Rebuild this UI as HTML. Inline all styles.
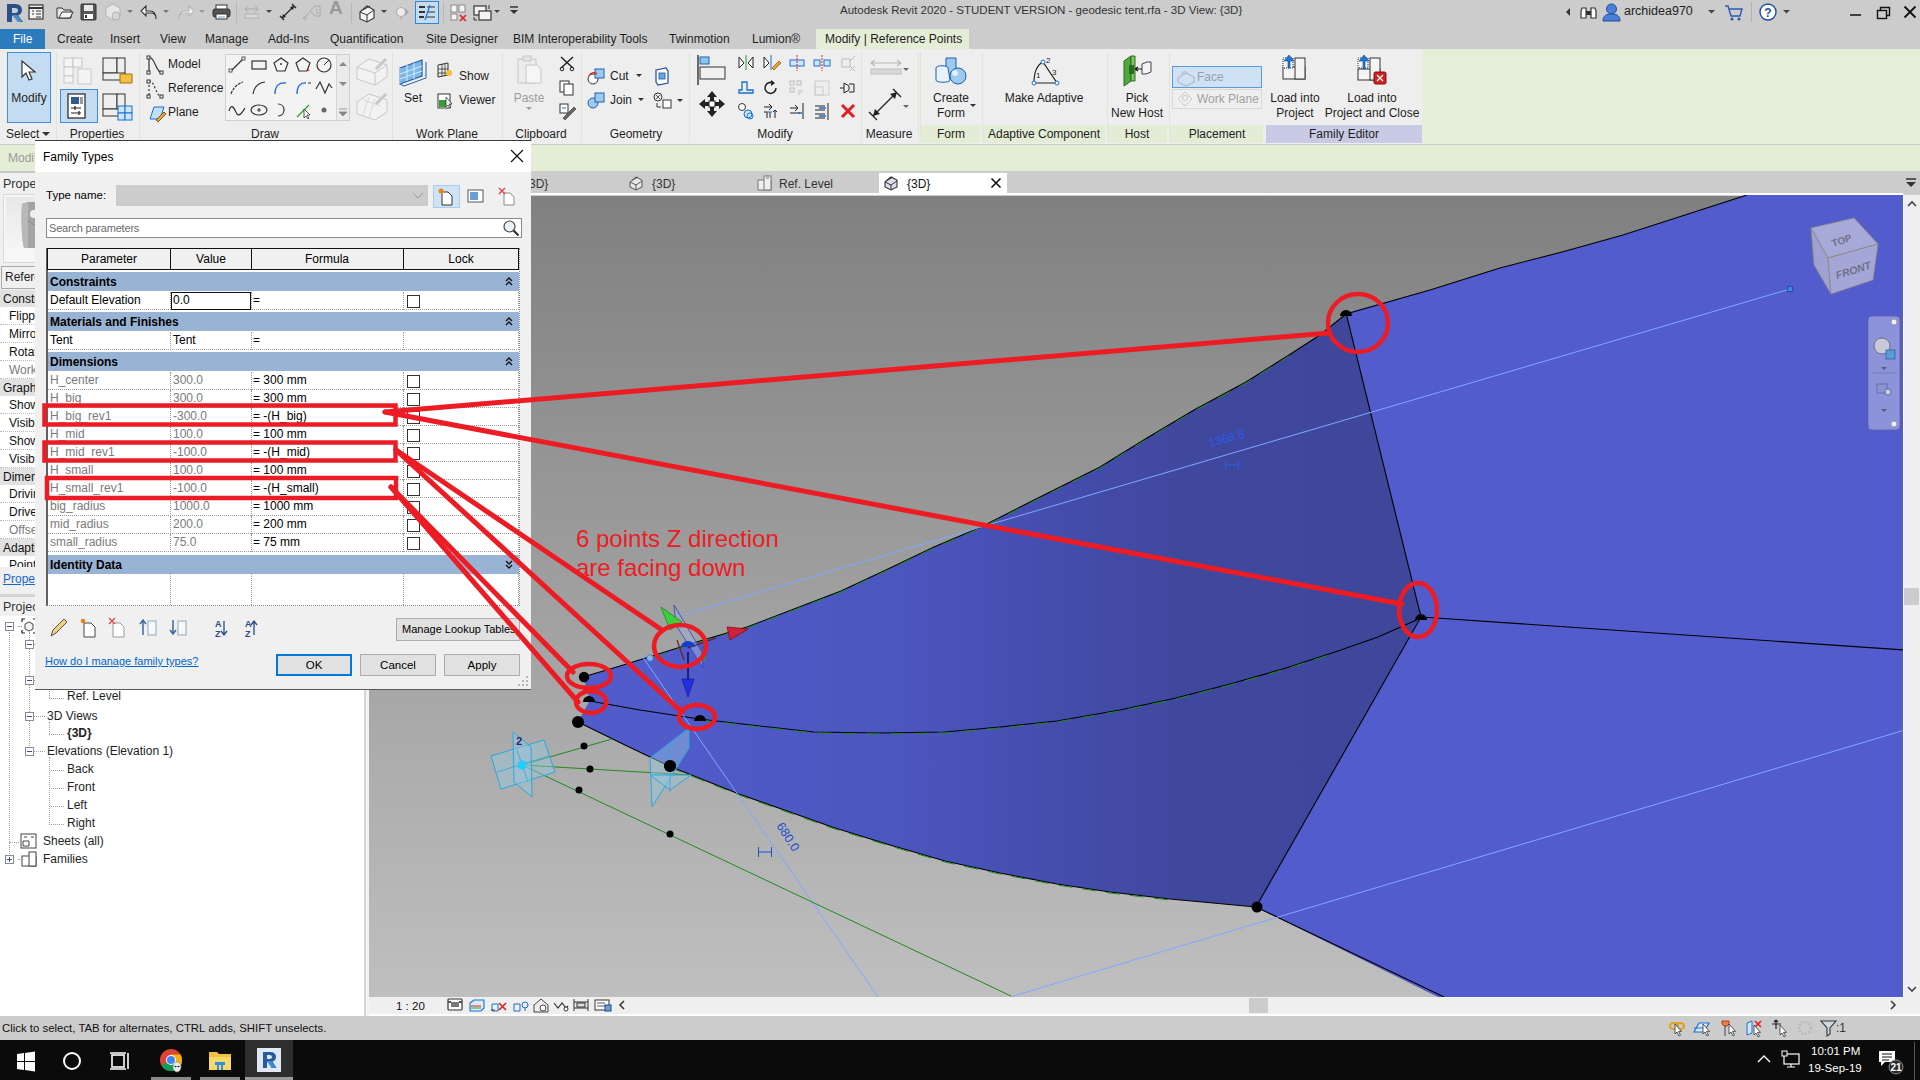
<!DOCTYPE html>
<html><head><meta charset="utf-8"><title>Revit</title>
<style>
*{margin:0;padding:0;box-sizing:border-box}
html,body{width:1920px;height:1080px;overflow:hidden}
body{position:relative;font-family:"Liberation Sans",sans-serif;font-size:12px;color:#1e1e1e;background:#cccccc}
.a{position:absolute}
.t{position:absolute;white-space:nowrap;line-height:14px}
svg{position:absolute;overflow:visible}
</style></head><body>

<!-- TITLE BAR -->
<div class="a" style="left:0;top:0;width:1920px;height:49px;background:#cccccc"></div>
<div class="t" style="left:840px;top:3px;font-size:11.5px;color:#333">Autodesk Revit 2020 - STUDENT VERSION - geodesic tent.rfa - 3D View: {3D}</div>
<!--QAT-->
<svg class="a" style="left:4px;top:2px" width="20" height="20" viewBox="0 0 20 20"><path d="M3,2h8c5,0 7,3 7,6c0,3 -2,5 -4,5.5l5,6.5h-5l-4,-6h-2v6h-5z" fill="#2a4f8a"/><path d="M8,6h3c2,0 3,1 3,2.5c0,1.5 -1,2.5 -3,2.5h-3z" fill="#cccccc"/><path d="M8,13l6,7h4l-5,-7z" fill="#4a90d0"/></svg>
<svg class="a" style="left:28px;top:4px" width="17" height="16" viewBox="0 0 17 16"><rect x="1" y="1" width="14" height="14" fill="#f4f4f4" stroke="#333" stroke-width="1.2"/><path d="M1,4h14" stroke="#333" stroke-width="2"/><path d="M4,7h2M4,10h2M8,7h5M8,10h5M8,13h5" stroke="#333"/></svg>
<svg class="a" style="left:56px;top:5px" width="18" height="14" viewBox="0 0 18 14"><path d="M1,3h5l2,2h7v8h-14z" fill="#e8e8e8" stroke="#333"/><path d="M3,13l3,-6h11l-3,6z" fill="#f4f4f4" stroke="#333"/></svg>
<svg class="a" style="left:80px;top:3px" width="18" height="18" viewBox="0 0 18 18"><rect x="1" y="1" width="15" height="16" rx="1" fill="#555" stroke="#333"/><rect x="4" y="2" width="9" height="6" fill="#e8e8e8"/><rect x="4" y="11" width="9" height="5" fill="#fff"/><rect x="5" y="12" width="2" height="3" fill="#333"/></svg>
<svg class="a" style="left:104px;top:3px" width="18" height="18" viewBox="0 0 18 18"><path d="M9,1l7,4v8l-7,4l-7,-4v-8z" fill="#e6e6e6" stroke="#b4b4b4"/><circle cx="12" cy="13" r="4" fill="#d6d6d6" stroke="#b0b0b0"/></svg>
<svg class="a" style="left:127px;top:10px" width="6" height="4" viewBox="0 0 6 4"><path d="M0,0h6l-3,3z" fill="#777"/></svg>
<svg class="a" style="left:140px;top:4px" width="18" height="16" viewBox="0 0 18 16"><path d="M6,2l-5,5l5,5v-3h5c3,0 5,2 5,5v1c0,-5 -2,-8 -6,-8h-4z" fill="#f4f4f4" stroke="#333" stroke-width="1.1"/></svg>
<svg class="a" style="left:163px;top:10px" width="6" height="4" viewBox="0 0 6 4"><path d="M0,0h6l-3,3z" fill="#777"/></svg>
<svg class="a" style="left:177px;top:4px" width="18" height="16" viewBox="0 0 18 16"><path d="M12,2l5,5l-5,5v-3h-5c-3,0 -5,2 -5,5v1c0,-5 2,-8 6,-8h4z" fill="#f4f4f4" stroke="#b4b4b4" stroke-width="1.1"/></svg>
<svg class="a" style="left:199px;top:10px" width="6" height="4" viewBox="0 0 6 4"><path d="M0,0h6l-3,3z" fill="#999"/></svg>
<svg class="a" style="left:212px;top:4px" width="19" height="16" viewBox="0 0 19 16"><rect x="4" y="1" width="11" height="5" fill="#fff" stroke="#333"/><rect x="1" y="5" width="17" height="8" rx="2" fill="#555" stroke="#333"/><rect x="4" y="10" width="11" height="5" fill="#fff" stroke="#333"/><path d="M6,13h7" stroke="#6aa0d8"/></svg>
<div class="a" style="left:236px;top:2px;width:1px;height:21px;background:#b8b8b8"></div>
<svg class="a" style="left:243px;top:5px" width="17" height="14" viewBox="0 0 17 14"><path d="M2,4h13M2,4l3,-3M2,4l3,3M15,4l-3,-3M15,4l-3,3" stroke="#a8a8a8" fill="none"/><rect x="2" y="9" width="13" height="4" fill="#d8d8d8" stroke="#b0b0b0"/></svg>
<svg class="a" style="left:266px;top:10px" width="6" height="4" viewBox="0 0 6 4"><path d="M0,0h6l-3,3z" fill="#444"/></svg>
<svg class="a" style="left:279px;top:3px" width="18" height="18" viewBox="0 0 18 18"><path d="M3,15l12,-12M1,13l4,4M13,1l4,4" stroke="#222" stroke-width="1.2"/><path d="M3,15l1,-4l3,3zM15,3l-4,1l3,3z" fill="#222"/></svg>
<svg class="a" style="left:303px;top:4px" width="18" height="16" viewBox="0 0 18 16"><path d="M2,13l4,-4" stroke="#aaa"/><path d="M7,7l5,-5h5v10h-5z" fill="none" stroke="#aaa"/><text x="12" y="10" font-size="7" fill="#aaa">1</text><circle cx="2" cy="14" r="1.5" fill="none" stroke="#aaa"/></svg>
<div class="t" style="left:329px;top:1px;font-size:19px;color:#999;font-weight:bold;">A</div>
<div class="a" style="left:351px;top:2px;width:1px;height:21px;background:#b8b8b8"></div>
<svg class="a" style="left:358px;top:4px" width="18" height="17" viewBox="0 0 18 17"><path d="M2,8l7,-6l7,4v8l-7,4l-7,-3z" fill="#f4f4f4" stroke="#333" stroke-width="1.1"/><path d="M2,8l7,3l7,-5M9,11v7" stroke="#333" fill="none"/><path d="M5,6l7,-4" stroke="#333"/></svg>
<svg class="a" style="left:381px;top:10px" width="6" height="4" viewBox="0 0 6 4"><path d="M0,0h6l-3,3z" fill="#444"/></svg>
<svg class="a" style="left:394px;top:4px" width="16" height="16" viewBox="0 0 16 16"><circle cx="7" cy="8" r="4.5" fill="#ececec" stroke="#aaa"/><path d="M11,4l4,4l-4,4z" fill="#aaa"/><path d="M7,12v4" stroke="#aaa"/></svg>
<div class="a" style="left:415px;top:1px;width:24px;height:23px;background:#c4dcf2;border:1px solid #2f86d8"></div>
<svg class="a" style="left:418px;top:4px" width="18" height="17" viewBox="0 0 18 17"><path d="M1,3h6M1,8h6M1,13h5" stroke="#333" stroke-width="2.2"/><path d="M9,3h8M9,8h8M8,13h9" stroke="#333" stroke-width="1"/><path d="M12,1l-5,15" stroke="#1a78d8" stroke-width="1.2"/></svg>
<div class="a" style="left:443px;top:2px;width:1px;height:21px;background:#b8b8b8"></div>
<svg class="a" style="left:450px;top:4px" width="18" height="18" viewBox="0 0 18 18"><rect x="1" y="1" width="6" height="7" fill="#f4f4f4" stroke="#888"/><rect x="9" y="1" width="6" height="7" fill="#f4f4f4" stroke="#888"/><rect x="1" y="10" width="6" height="6" fill="#f4f4f4" stroke="#888"/><path d="M10,11l6,6M16,11l-6,6" stroke="#e02020" stroke-width="1.6"/></svg>
<svg class="a" style="left:473px;top:4px" width="20" height="17" viewBox="0 0 20 17"><rect x="1" y="2" width="12" height="9" fill="#f4f4f4" stroke="#333" stroke-width="1.2"/><rect x="6" y="7" width="12" height="9" fill="#f4f4f4" stroke="#333" stroke-width="1.2"/><path d="M16,1v4M1,13v3h3" stroke="#333" fill="none"/></svg>
<svg class="a" style="left:494px;top:10px" width="6" height="4" viewBox="0 0 6 4"><path d="M0,0h6l-3,3z" fill="#444"/></svg>
<svg class="a" style="left:509px;top:6px" width="10" height="10" viewBox="0 0 10 10"><path d="M1,1h8" stroke="#333" stroke-width="1.5"/><path d="M1,4h8l-4,4z" fill="#333"/></svg>
<svg class="a" style="left:1565px;top:7px" width="6" height="10" viewBox="0 0 6 10"><path d="M5,1v8l-4,-4z" fill="#333"/></svg>
<svg class="a" style="left:1579px;top:4px" width="19" height="17" viewBox="0 0 19 17"><path d="M3,4h4v10h-5v-7zM12,4h4l1,3v7h-5z" fill="#fff" stroke="#333" stroke-width="1.2"/><rect x="7" y="7" width="5" height="4" fill="#333"/></svg>
<svg class="a" style="left:1602px;top:2px" width="19" height="20" viewBox="0 0 19 20"><circle cx="9.5" cy="7" r="5" fill="#4a7ed8" stroke="#1f4f98"/><path d="M1,19c0,-6 4,-7 8.5,-7s8.5,1 8.5,7z" fill="#4a7ed8" stroke="#1f4f98"/></svg>
<div class="t" style="left:1624px;top:4px;font-size:12.5px;color:#222;">archidea970</div>
<svg class="a" style="left:1708px;top:10px" width="7" height="4" viewBox="0 0 7 4"><path d="M0,0h7l-3.5,3.5z" fill="#444"/></svg>
<svg class="a" style="left:1724px;top:4px" width="19" height="17" viewBox="0 0 19 17"><path d="M1,2h3l3,10h9l2,-7h-13" fill="none" stroke="#2a5ab0" stroke-width="1.4"/><circle cx="8" cy="15" r="1.5" fill="#2a5ab0"/><circle cx="15" cy="15" r="1.5" fill="#2a5ab0"/></svg>
<div class="a" style="left:1751px;top:2px;width:1px;height:20px;background:#b0b0b0"></div>
<svg class="a" style="left:1759px;top:3px" width="18" height="18" viewBox="0 0 18 18"><circle cx="9" cy="9" r="8" fill="#fff" stroke="#1f4f98" stroke-width="1.4"/><text x="5.3" y="13.5" font-size="12" font-weight="bold" fill="#1f4f98" font-family="Liberation Sans">?</text></svg>
<svg class="a" style="left:1783px;top:10px" width="7" height="4" viewBox="0 0 7 4"><path d="M0,0h7l-3.5,3.5z" fill="#444"/></svg>
<svg class="a" style="left:1849px;top:13px" width="14" height="4" viewBox="0 0 14 4"><path d="M1,2h11" stroke="#111" stroke-width="1.5"/></svg>
<svg class="a" style="left:1876px;top:6px" width="15" height="14" viewBox="0 0 15 14"><rect x="1.5" y="4.5" width="9" height="8" fill="none" stroke="#111" stroke-width="1.4"/><path d="M4.5,4.5v-3h9v8h-3" fill="none" stroke="#111" stroke-width="1.4"/></svg>
<svg class="a" style="left:1903px;top:5px" width="14" height="14" viewBox="0 0 14 14"><path d="M1.5,1.5l11,11M12.5,1.5l-11,11" stroke="#111" stroke-width="1.8"/></svg>
<!--/QAT-->

<!-- TABS -->
<div class="a" style="left:0;top:29px;width:45px;height:20px;background:#2b7bbd"></div>
<div class="t" style="left:13px;top:32px;color:#fff">File</div>
<div class="t" style="left:57px;top:32px">Create</div>
<div class="t" style="left:110px;top:32px">Insert</div>
<div class="t" style="left:160px;top:32px">View</div>
<div class="t" style="left:205px;top:32px">Manage</div>
<div class="t" style="left:268px;top:32px">Add-Ins</div>
<div class="t" style="left:330px;top:32px">Quantification</div>
<div class="t" style="left:426px;top:32px">Site Designer</div>
<div class="t" style="left:513px;top:32px">BIM Interoperability Tools</div>
<div class="t" style="left:669px;top:32px">Twinmotion</div>
<div class="t" style="left:752px;top:32px">Lumion®</div>
<div class="a" style="left:816px;top:29px;width:153px;height:20px;background:#e4edd6"></div>
<div class="t" style="left:825px;top:32px">Modify | Reference Points</div>

<!-- RIBBON -->
<div class="a" style="left:0;top:49px;width:1920px;height:96px;background:#e5eed8"></div>
<div class="a" style="left:0;top:49px;width:1422px;height:95px;background:#eeeeee"></div>
<div class="a" style="left:0;top:144px;width:1920px;height:1px;background:#c8c8c8"></div>
<!--RIBBONCONTENT-->
<div class="a" style="left:56px;top:52px;width:1px;height:90px;background:#dfe6d6;"></div>
<div class="a" style="left:139px;top:52px;width:1px;height:90px;background:#dfe6d6;"></div>
<div class="a" style="left:392px;top:52px;width:1px;height:90px;background:#dfe6d6;"></div>
<div class="a" style="left:502px;top:52px;width:1px;height:90px;background:#dfe6d6;"></div>
<div class="a" style="left:581px;top:52px;width:1px;height:90px;background:#dfe6d6;"></div>
<div class="a" style="left:689px;top:52px;width:1px;height:90px;background:#dfe6d6;"></div>
<div class="a" style="left:861px;top:52px;width:1px;height:90px;background:#dfe6d6;"></div>
<div class="a" style="left:918px;top:52px;width:1px;height:90px;background:#dfe6d6;"></div>
<div class="a" style="left:921px;top:125px;width:59px;height:18px;background:#e3ecd5;"></div>
<div class="a" style="left:920px;top:52px;width:1px;height:90px;background:#dfe6d6;"></div>
<div class="a" style="left:983px;top:125px;width:122px;height:18px;background:#e3ecd5;"></div>
<div class="a" style="left:982px;top:52px;width:1px;height:90px;background:#dfe6d6;"></div>
<div class="a" style="left:1108px;top:125px;width:59px;height:18px;background:#e3ecd5;"></div>
<div class="a" style="left:1107px;top:52px;width:1px;height:90px;background:#dfe6d6;"></div>
<div class="a" style="left:1170px;top:125px;width:93px;height:18px;background:#e3ecd5;"></div>
<div class="a" style="left:1169px;top:52px;width:1px;height:90px;background:#dfe6d6;"></div>
<div class="a" style="left:1266px;top:125px;width:156px;height:18px;background:#c8cae6;"></div>
<div class="t" style="left:6px;top:127px;font-size:12px;color:#1e1e1e">Select</div>
<div class="t" style="left:17.0px;width:160px;text-align:center;top:127px;font-size:12px;color:#1e1e1e">Properties</div>
<div class="t" style="left:185.0px;width:160px;text-align:center;top:127px;font-size:12px;color:#1e1e1e">Draw</div>
<div class="t" style="left:367.0px;width:160px;text-align:center;top:127px;font-size:12px;color:#1e1e1e">Work Plane</div>
<div class="t" style="left:461.0px;width:160px;text-align:center;top:127px;font-size:12px;color:#1e1e1e">Clipboard</div>
<div class="t" style="left:556.0px;width:160px;text-align:center;top:127px;font-size:12px;color:#1e1e1e">Geometry</div>
<div class="t" style="left:695.0px;width:160px;text-align:center;top:127px;font-size:12px;color:#1e1e1e">Modify</div>
<div class="t" style="left:809.0px;width:160px;text-align:center;top:127px;font-size:12px;color:#1e1e1e">Measure</div>
<div class="t" style="left:871.0px;width:160px;text-align:center;top:127px;font-size:12px;color:#1e1e1e">Form</div>
<div class="t" style="left:964.0px;width:160px;text-align:center;top:127px;font-size:12px;color:#1e1e1e">Adaptive Component</div>
<div class="t" style="left:1057.0px;width:160px;text-align:center;top:127px;font-size:12px;color:#1e1e1e">Host</div>
<div class="t" style="left:1137.0px;width:160px;text-align:center;top:127px;font-size:12px;color:#1e1e1e">Placement</div>
<div class="t" style="left:1264.0px;width:160px;text-align:center;top:127px;font-size:12px;color:#1e1e1e">Family Editor</div>
<svg class="a" style="left:41px;top:131px" width="10" height="6" viewBox="0 0 10 6"><path d="M1,1h8l-4,4z" fill="#333"/></svg>
<div class="a" style="left:7px;top:52px;width:44px;height:71px;background:#c4dcf2;border:1px solid #3c8fe0"></div>
<svg class="a" style="left:20px;top:60px" width="16" height="22" viewBox="0 0 16 22"><path d="M2,1v16l4,-4l3,7l3,-1l-3,-7h6z" fill="#fff" stroke="#333" stroke-width="1.2"/></svg>
<div class="t" style="left:-51.0px;width:160px;text-align:center;top:91px;font-size:12px;color:#1e1e1e">Modify</div>
<svg class="a" style="left:62px;top:55px" width="32" height="30" viewBox="0 0 32 30"><g fill="#f4f4f4" stroke="#c8c8c8"><rect x="2" y="3" width="9" height="9"/><rect x="11" y="3" width="9" height="9"/><rect x="2" y="12" width="9" height="9"/><rect x="2" y="21" width="9" height="7"/><rect x="16" y="14" width="13" height="15"/></g></svg>
<svg class="a" style="left:102px;top:55px" width="32" height="30" viewBox="0 0 32 30"><rect x="1" y="3" width="14" height="15" fill="#eee" stroke="#333"/><rect x="15" y="3" width="8" height="20" fill="#eee" stroke="#333"/><rect x="1" y="18" width="22" height="7" fill="#eee" stroke="#333"/><path d="M18,19h12v9h-12z" fill="#f2c040" stroke="#a07010"/></svg>
<div class="a" style="left:60px;top:89px;width:38px;height:34px;background:#c4dcf2;border:1px solid #3c8fe0"></div>
<svg class="a" style="left:66px;top:92px" width="26" height="30" viewBox="0 0 26 30"><rect x="2" y="2" width="17" height="24" fill="#fff" stroke="#222" stroke-width="1.2"/><rect x="5" y="5" width="8" height="7" fill="#2f5a90"/><rect x="14" y="5" width="3" height="7" fill="#999"/><path d="M5,16h10M5,21h10M9,14v4M13,19v4" stroke="#222" stroke-width="1.2"/></svg>
<svg class="a" style="left:102px;top:92px" width="32" height="30" viewBox="0 0 32 30"><rect x="1" y="2" width="14" height="15" fill="#eee" stroke="#333"/><rect x="15" y="2" width="8" height="18" fill="#eee" stroke="#333"/><rect x="1" y="17" width="22" height="7" fill="#eee" stroke="#333"/><g fill="#cfe6ff" stroke="#1a6fd0"><rect x="16" y="14" width="7" height="7"/><rect x="23" y="14" width="7" height="7"/><rect x="16" y="21" width="7" height="7"/><rect x="23" y="21" width="7" height="7"/></g></svg>
<svg class="a" style="left:146px;top:55px" width="20" height="20" viewBox="0 0 20 20"><path d="M3,2v16M3,2c6,0 7,16 13,16" stroke="#333" fill="none" stroke-width="1.2"/><rect x="1" y="1" width="3" height="3" fill="#fff" stroke="#333"/><rect x="1" y="16" width="3" height="3" fill="#fff" stroke="#333"/><rect x="14" y="16" width="3" height="3" fill="#fff" stroke="#333"/></svg>
<div class="t" style="left:168px;top:57px;font-size:12px;color:#1e1e1e;">Model</div>
<svg class="a" style="left:146px;top:79px" width="20" height="20" viewBox="0 0 20 20"><path d="M3,2v16M3,2c6,0 7,16 13,16" stroke="#333" fill="none" stroke-width="1.2" stroke-dasharray="2,2"/><rect x="1" y="1" width="3" height="3" fill="#fff" stroke="#333"/><rect x="1" y="16" width="3" height="3" fill="#fff" stroke="#333"/><rect x="14" y="16" width="3" height="3" fill="#fff" stroke="#333"/></svg>
<div class="t" style="left:168px;top:81px;font-size:12px;color:#1e1e1e;">Reference</div>
<svg class="a" style="left:146px;top:103px" width="20" height="20" viewBox="0 0 20 20"><path d="M4,16l4,-12h10l-4,12z" fill="#bfe0f8" stroke="#1a6fd0"/><path d="M10,17l8,-8l2,2l-8,8z" fill="#f0a030" stroke="#6a3a00" stroke-width="0.8"/></svg>
<div class="t" style="left:168px;top:105px;font-size:12px;color:#1e1e1e;">Plane</div>
<div class="a" style="left:225px;top:54px;width:125px;height:67px;background:#f3f3f3;border:1px solid #cfcfcf"></div>
<div class="a" style="left:336px;top:55px;width:13px;height:65px;background:#eaeaea;border-left:1px solid #d4d4d4"></div>
<svg class="a" style="left:337px;top:60px" width="12" height="60" viewBox="0 0 12 60"><path d="M2,6l4,-4l4,4z" fill="#888"/><path d="M2,22l4,4l4,-4z" fill="#888"/><path d="M2,49h8M2,52l4,4l4,-4z" fill="#888" stroke="#888" stroke-width="0.8"/></svg>
<svg class="a" style="left:228px;top:56px" width="18" height="18" viewBox="0 0 18 18"><path d="M3,15l12,-12" stroke="#333" stroke-width="1.2"/><rect x="1" y="13" width="3" height="3" fill="#fff" stroke="#333" stroke-width="0.8"/><rect x="14" y="1" width="3" height="3" fill="#fff" stroke="#333" stroke-width="0.8"/></svg>
<svg class="a" style="left:250px;top:56px" width="18" height="18" viewBox="0 0 18 18"><rect x="2" y="5" width="14" height="8" fill="none" stroke="#333" stroke-width="1.2"/></svg>
<svg class="a" style="left:272px;top:56px" width="18" height="18" viewBox="0 0 18 18"><path d="M9,2l7,5l-3,8h-8l-3,-8z" fill="none" stroke="#333" stroke-width="1.2"/><circle cx="9" cy="8" r="1" fill="#333"/></svg>
<svg class="a" style="left:294px;top:56px" width="18" height="18" viewBox="0 0 18 18"><path d="M9,2l7,5l-3,8h-8l-3,-8z" fill="none" stroke="#333" stroke-width="1.2"/><path d="M13,12l2,3" stroke="#e02020" stroke-width="1.2"/></svg>
<svg class="a" style="left:315px;top:56px" width="18" height="18" viewBox="0 0 18 18"><circle cx="9" cy="9" r="7" fill="none" stroke="#333" stroke-width="1.2"/><path d="M9,9l5,-5" stroke="#333"/></svg>
<svg class="a" style="left:228px;top:79px" width="18" height="18" viewBox="0 0 18 18"><path d="M3,15c2,-6 6,-10 12,-12" stroke="#333" stroke-width="1.2" fill="none" stroke-dasharray="3,1"/></svg>
<svg class="a" style="left:250px;top:79px" width="18" height="18" viewBox="0 0 18 18"><path d="M3,15c1,-7 5,-11 12,-12" stroke="#333" stroke-width="1.2" fill="none"/></svg>
<svg class="a" style="left:272px;top:79px" width="18" height="18" viewBox="0 0 18 18"><path d="M3,15c0,-8 4,-12 11,-11" stroke="#1a6fd0" stroke-width="1.4" fill="none"/></svg>
<svg class="a" style="left:294px;top:79px" width="18" height="18" viewBox="0 0 18 18"><path d="M3,15c0,-8 4,-12 9,-11" stroke="#1a6fd0" stroke-width="1.4" fill="none"/><path d="M14,4h3" stroke="#333"/></svg>
<svg class="a" style="left:315px;top:79px" width="18" height="18" viewBox="0 0 18 18"><path d="M1,10l4,-7l5,11l4,-9l3,4" stroke="#333" stroke-width="1.2" fill="none"/></svg>
<svg class="a" style="left:228px;top:101px" width="18" height="18" viewBox="0 0 18 18"><path d="M1,10c3,-10 6,0 8,3c3,3 6,-3 8,-6" stroke="#333" stroke-width="1.2" fill="none"/></svg>
<svg class="a" style="left:250px;top:101px" width="18" height="18" viewBox="0 0 18 18"><ellipse cx="9" cy="9" rx="8" ry="5" fill="none" stroke="#333" stroke-width="1.2"/><path d="M9,7v4M7,9h4" stroke="#333"/></svg>
<svg class="a" style="left:272px;top:101px" width="18" height="18" viewBox="0 0 18 18"><path d="M6,3c8,0 8,12 0,12" stroke="#333" stroke-width="1.2" fill="none"/></svg>
<svg class="a" style="left:294px;top:101px" width="18" height="18" viewBox="0 0 18 18"><path d="M3,16l12,-12" stroke="#22aa22" stroke-width="1.3"/><path d="M10,8v9l2,-2l2,3l1,-1l-2,-3h3z" fill="#fff" stroke="#333" stroke-width="0.8"/></svg>
<svg class="a" style="left:315px;top:101px" width="18" height="18" viewBox="0 0 18 18"><circle cx="9" cy="9" r="2.5" fill="#666"/></svg>
<svg class="a" style="left:354px;top:55px" width="36" height="30" viewBox="0 0 36 30"><path d="M3,12l12,-8l18,6v12l-12,8l-18,-6z" fill="#f2f2f2" stroke="#c8c8c8"/><path d="M3,12l18,6l12,-8M21,18v12" stroke="#c8c8c8" fill="none"/><path d="M22,14l10,-10" stroke="#c8c8c8" stroke-width="3"/></svg>
<svg class="a" style="left:354px;top:90px" width="36" height="30" viewBox="0 0 36 30"><path d="M3,12l12,-8l18,6v12l-12,8l-18,-6z" fill="#f2f2f2" stroke="#c8c8c8"/><path d="M9,10l18,6M15,7l-6,18M21,9l-6,18" stroke="#d8d8d8" fill="none"/><path d="M22,14l10,-10" stroke="#c8c8c8" stroke-width="3"/></svg>
<svg class="a" style="left:398px;top:56px" width="30" height="30" viewBox="0 0 30 30"><path d="M2,12l22,-8v16l-22,8z" fill="#7ab8e8" stroke="#1f5fa8" stroke-width="1.2"/><path d="M2,12v16M9,9v16M16,7v16M2,18l22,-8M2,23l22,-8" stroke="#d8ecfa" stroke-width="1"/><path d="M2,28l4,2l22,-8v-16" fill="none" stroke="#1f5fa8"/></svg>
<div class="t" style="left:333.0px;width:160px;text-align:center;top:91px;font-size:12px;color:#1e1e1e">Set</div>
<svg class="a" style="left:436px;top:61px" width="18" height="18" viewBox="0 0 18 18"><path d="M2,4l10,-2v12l-10,2z" fill="none" stroke="#333"/><path d="M2,8h10M2,12h10M6,3v12M9,3v12" stroke="#333" stroke-width="0.8"/><circle cx="13" cy="12" r="3" fill="#f8c030"/></svg>
<div class="t" style="left:459px;top:69px;font-size:12px;color:#1e1e1e;">Show</div>
<svg class="a" style="left:436px;top:92px" width="18" height="18" viewBox="0 0 18 18"><rect x="2" y="2" width="12" height="14" fill="#fff" stroke="#333"/><rect x="3" y="8" width="7" height="7" fill="#3a9a3a"/><path d="M10,5v10l2,-2l2,3l1,-1l-2,-3h3z" fill="#fff" stroke="#333" stroke-width="0.8"/></svg>
<div class="t" style="left:459px;top:93px;font-size:12px;color:#1e1e1e;">Viewer</div>
<svg class="a" style="left:515px;top:54px" width="30" height="32" viewBox="0 0 30 32"><rect x="3" y="5" width="18" height="24" fill="#ececec" stroke="#c6c6c6"/><rect x="8" y="2" width="8" height="5" fill="#e4e4e4" stroke="#c6c6c6"/><path d="M11,11h11l4,4v14h-15z" fill="#f6f6f6" stroke="#c6c6c6"/></svg>
<div class="t" style="left:449.0px;width:160px;text-align:center;top:91px;font-size:12px;color:#9c9c9c">Paste</div>
<svg class="a" style="left:525px;top:106px" width="8" height="5" viewBox="0 0 8 5"><path d="M1,1h6l-3,3z" fill="#9c9c9c"/></svg>
<svg class="a" style="left:559px;top:55px" width="16" height="16" viewBox="0 0 16 16"><path d="M2,2l12,11M14,2l-12,11" stroke="#222" stroke-width="1.5"/><circle cx="3" cy="14" r="1.8" fill="none" stroke="#222"/><circle cx="13" cy="14" r="1.8" fill="none" stroke="#222"/></svg>
<svg class="a" style="left:559px;top:80px" width="16" height="16" viewBox="0 0 16 16"><rect x="1" y="1" width="9" height="11" fill="#fff" stroke="#333"/><rect x="5" y="4" width="9" height="11" fill="#fff" stroke="#333"/></svg>
<svg class="a" style="left:559px;top:103px" width="18" height="16" viewBox="0 0 18 16"><rect x="1" y="1" width="8" height="9" fill="#fff" stroke="#333"/><path d="M3,5h4" stroke="#1a6fd0"/><path d="M4,15l11,-11l2,2l-11,11z" fill="#666" stroke="#333" stroke-width="0.6"/></svg>
<svg class="a" style="left:587px;top:67px" width="20" height="18" viewBox="0 0 20 18"><circle cx="6" cy="12" r="5" fill="#fff" stroke="#333"/><rect x="8" y="2" width="9" height="9" fill="#9ccaf0" stroke="#1f5fa8"/><path d="M2,9a5,5 0 0 1 8,-2" stroke="#e02020" fill="none" stroke-width="1.2"/></svg>
<div class="t" style="left:610px;top:69px;font-size:12px;color:#1e1e1e;">Cut</div>
<svg class="a" style="left:636px;top:74px" width="6" height="4" viewBox="0 0 6 4"><path d="M0,0h6l-3,3z" fill="#333"/></svg>
<svg class="a" style="left:587px;top:91px" width="20" height="18" viewBox="0 0 20 18"><circle cx="6" cy="12" r="5" fill="#9ccaf0" stroke="#1f5fa8"/><rect x="8" y="2" width="9" height="9" fill="#9ccaf0" stroke="#1f5fa8"/></svg>
<div class="t" style="left:610px;top:93px;font-size:12px;color:#1e1e1e;">Join</div>
<svg class="a" style="left:638px;top:98px" width="6" height="4" viewBox="0 0 6 4"><path d="M0,0h6l-3,3z" fill="#333"/></svg>
<svg class="a" style="left:654px;top:67px" width="16" height="18" viewBox="0 0 16 18"><path d="M2,3l10,-2l2,3v12l-10,2l-2,-3z" fill="#fff" stroke="#1f4f98" stroke-width="1.2"/><rect x="5" y="6" width="6" height="6" fill="#6aa8e0" stroke="#1f4f98" stroke-width="0.8"/></svg>
<svg class="a" style="left:653px;top:92px" width="24" height="18" viewBox="0 0 24 18"><circle cx="5" cy="5" r="4" fill="none" stroke="#333"/><path d="M3,3l4,4M7,3l-4,4" stroke="#333" stroke-width="0.8"/><rect x="10" y="8" width="8" height="8" fill="#fff" stroke="#333"/><path d="M4,11v4h4" stroke="#333" fill="none"/></svg>
<svg class="a" style="left:677px;top:99px" width="6" height="4" viewBox="0 0 6 4"><path d="M0,0h6l-3,3z" fill="#333"/></svg>
<svg class="a" style="left:696px;top:54px" width="32" height="32" viewBox="0 0 32 32"><path d="M2,1v30" stroke="#222" stroke-width="1.3"/><rect x="4" y="3" width="9" height="7" fill="#8cc4ee" stroke="#1f5fa8"/><rect x="4" y="13" width="25" height="12" fill="#f0f0f0" stroke="#333"/></svg>
<svg class="a" style="left:697px;top:89px" width="30" height="32" viewBox="0 0 30 32"><path d="M15,2l5,6h-3v5h5v-3l6,5l-6,5v-3h-5v5h3l-5,6l-5,-6h3v-5h-5v3l-6,-5l6,-5v3h5v-5h-3z" fill="#222"/><rect x="12" y="12" width="6" height="6" fill="#fff" stroke="#222"/></svg>
<svg class="a" style="left:737px;top:54px" width="18" height="18" viewBox="0 0 18 18"><path d="M2,3v11l5,-5zM16,3v11l-5,-5z" fill="#fff" stroke="#222"/><path d="M9,1v15" stroke="#2a9a2a"/></svg>
<svg class="a" style="left:762px;top:54px" width="18" height="18" viewBox="0 0 18 18"><path d="M2,3v11l5,-5z" fill="#fff" stroke="#222"/><path d="M9,1v15" stroke="#2a6ad0"/><path d="M10,14l7,-7l2,2l-7,7z" fill="#f0a030" stroke="#6a3a00" stroke-width="0.6"/></svg>
<svg class="a" style="left:788px;top:54px" width="18" height="18" viewBox="0 0 18 18"><rect x="2" y="6" width="14" height="6" fill="#cfe6fa" stroke="#1a6fd0"/><path d="M9,1v16" stroke="#e02020" stroke-dasharray="2,1"/></svg>
<svg class="a" style="left:813px;top:54px" width="18" height="18" viewBox="0 0 18 18"><rect x="1" y="6" width="6" height="6" fill="#cfe6fa" stroke="#1a6fd0"/><rect x="11" y="6" width="6" height="6" fill="#cfe6fa" stroke="#1a6fd0"/><path d="M9,1v16" stroke="#e02020" stroke-dasharray="2,1"/></svg>
<svg class="a" style="left:839px;top:54px" width="18" height="18" viewBox="0 0 18 18"><path d="M3,5h8v8h-8zM11,7l5,-5" stroke="#bbb" fill="none"/><path d="M11,12l5,5M16,12l-5,5" stroke="#bbb"/></svg>
<svg class="a" style="left:737px;top:79px" width="18" height="18" viewBox="0 0 18 18"><path d="M2,14h14v-3h-6v-8h-5v8h-3z" fill="none" stroke="#1a6fd0" stroke-width="1.3"/></svg>
<svg class="a" style="left:762px;top:79px" width="18" height="18" viewBox="0 0 18 18"><path d="M14,9a5.5,5.5 0 1 1 -3,-5" fill="none" stroke="#222" stroke-width="1.5"/><path d="M9,1l4,3l-4,3z" fill="#222"/></svg>
<svg class="a" style="left:788px;top:79px" width="18" height="18" viewBox="0 0 18 18"><g fill="none" stroke="#bbb"><rect x="2" y="2" width="4" height="4"/><rect x="9" y="2" width="4" height="4"/><rect x="2" y="9" width="4" height="4"/></g><text x="10" y="16" font-size="7" fill="#bbb">P</text></svg>
<svg class="a" style="left:813px;top:79px" width="18" height="18" viewBox="0 0 18 18"><rect x="2" y="2" width="14" height="14" fill="none" stroke="#ccc"/><rect x="2" y="8" width="8" height="8" fill="none" stroke="#ccc"/></svg>
<svg class="a" style="left:839px;top:79px" width="18" height="18" viewBox="0 0 18 18"><path d="M1,9h4M5,4v10l5,-3v-4z" fill="none" stroke="#222"/><path d="M10,5h5v8h-5" fill="none" stroke="#222"/></svg>
<svg class="a" style="left:737px;top:102px" width="18" height="18" viewBox="0 0 18 18"><circle cx="5" cy="5" r="3.5" fill="#fff" stroke="#333"/><circle cx="11" cy="12" r="4" fill="#cfe6fa" stroke="#1a6fd0"/><circle cx="13" cy="14" r="3" fill="none" stroke="#1a6fd0"/></svg>
<svg class="a" style="left:762px;top:102px" width="18" height="18" viewBox="0 0 18 18"><path d="M2,5h8M7,2l3,3l-3,3M2,10h3v6M8,10v6M13,16v-8M11,10l2,-2l2,2" stroke="#222" fill="none"/><path d="M5,10h5" stroke="#1a6fd0"/></svg>
<svg class="a" style="left:788px;top:102px" width="18" height="18" viewBox="0 0 18 18"><path d="M2,6h8M7,3l3,3l-3,3M2,11h10M15,1v16" stroke="#222" fill="none"/><path d="M10,11h4" stroke="#1a6fd0" stroke-width="1.5"/></svg>
<svg class="a" style="left:813px;top:102px" width="18" height="18" viewBox="0 0 18 18"><path d="M2,4h10M2,8h10M2,12h10M2,16h10M15,1v17" stroke="#222" fill="none"/><path d="M6,6h7M6,14h7" stroke="#1a6fd0" stroke-width="1.5"/></svg>
<svg class="a" style="left:839px;top:102px" width="18" height="18" viewBox="0 0 18 18"><path d="M3,3l12,12M15,3l-12,12" stroke="#e02020" stroke-width="3"/></svg>
<svg class="a" style="left:867px;top:58px" width="40" height="20" viewBox="0 0 40 20"><path d="M4,5h30M4,5l4,-3M4,5l4,3M34,5l-4,-3M34,5l-4,3" stroke="#b8b8b8" fill="none" stroke-width="1.2"/><rect x="4" y="11" width="30" height="5" fill="#d8d8d8" stroke="#c0c0c0"/></svg>
<svg class="a" style="left:903px;top:68px" width="6" height="4" viewBox="0 0 6 4"><path d="M0,0h6l-3,3z" fill="#666"/></svg>
<svg class="a" style="left:867px;top:88px" width="40" height="34" viewBox="0 0 40 34"><path d="M6,28l24,-24M2,24l8,8M26,1l8,8" stroke="#222" stroke-width="1.3" fill="none"/><path d="M6,28l2,-7l5,5zM30,4l-7,2l5,5z" fill="#222"/></svg>
<svg class="a" style="left:903px;top:105px" width="6" height="4" viewBox="0 0 6 4"><path d="M0,0h6l-3,3z" fill="#666"/></svg>
<svg class="a" style="left:934px;top:54px" width="34" height="32" viewBox="0 0 34 32"><path d="M12,4h10v20h-10z" fill="#9ccaf0" stroke="#1f5fa8"/><path d="M2,14c0,-3 12,-3 12,0l2,12c0,3 -14,3 -14,0z" fill="#e8f2fc" stroke="#1f5fa8"/><circle cx="24" cy="22" r="8" fill="#9ccaf0" stroke="#1f5fa8"/><circle cx="21" cy="19" r="3" fill="#e0f0ff"/></svg>
<div class="t" style="left:871.0px;width:160px;text-align:center;top:91px;font-size:12px;color:#1e1e1e">Create</div>
<div class="t" style="left:871.0px;width:160px;text-align:center;top:106px;font-size:12px;color:#1e1e1e">Form</div>
<svg class="a" style="left:970px;top:104px" width="6" height="4" viewBox="0 0 6 4"><path d="M0,0h6l-3,3z" fill="#333"/></svg>
<svg class="a" style="left:1030px;top:56px" width="34" height="32" viewBox="0 0 34 32"><path d="M4,27c0,-10 3,-18 9,-21l14,21z" fill="none" stroke="#222" stroke-width="1.2"/><circle cx="4" cy="27" r="2" fill="#fff" stroke="#1a6fd0"/><circle cx="13" cy="6" r="2" fill="#fff" stroke="#1a6fd0"/><circle cx="27" cy="27" r="2" fill="#fff" stroke="#1a6fd0"/><text x="16" y="7" font-size="8" fill="#222">2</text><text x="6" y="22" font-size="8" fill="#222">1</text><text x="22" y="19" font-size="8" fill="#222">3</text></svg>
<div class="t" style="left:964.0px;width:160px;text-align:center;top:91px;font-size:12px;color:#1e1e1e">Make Adaptive</div>
<svg class="a" style="left:1121px;top:54px" width="34" height="34" viewBox="0 0 34 34"><path d="M3,7l7,-5v25l-7,5z" fill="#52a840" stroke="#2a6a20"/><path d="M10,2h4v25h-4z" fill="#7ac860" stroke="#2a6a20"/><rect x="8" y="11" width="5" height="9" fill="#2a6a20"/><path d="M14,15h7M14,15l3,-2M14,15l3,2" stroke="#111" stroke-width="1.2"/><path d="M21,10l5,-2h4v10l-5,2h-4z" fill="#f4f4f4" stroke="#444"/></svg>
<div class="t" style="left:1057.0px;width:160px;text-align:center;top:91px;font-size:12px;color:#1e1e1e">Pick</div>
<div class="t" style="left:1057.0px;width:160px;text-align:center;top:106px;font-size:12px;color:#1e1e1e">New Host</div>
<div class="a" style="left:1172px;top:66px;width:90px;height:22px;background:#cfe1f5;border:1px solid #5a9ae0"></div>
<svg class="a" style="left:1176px;top:68px" width="20" height="18" viewBox="0 0 20 18"><path d="M2,10l8,-5l8,4v5l-8,4l-8,-4z" fill="none" stroke="#aab0b8"/><path d="M6,6c0,-3 5,-3 5,0" fill="none" stroke="#aab0b8"/></svg>
<div class="t" style="left:1197px;top:70px;font-size:12px;color:#9aa0a8;">Face</div>
<div class="a" style="left:1172px;top:89px;width:90px;height:20px;background:#efefef;border:1px solid #d8d8d8"></div>
<svg class="a" style="left:1176px;top:90px" width="18" height="18" viewBox="0 0 18 18"><path d="M9,2l7,7l-7,7l-7,-7z" fill="none" stroke="#c8c8c8"/><circle cx="9" cy="8" r="2.5" fill="none" stroke="#c8c8c8"/></svg>
<div class="t" style="left:1197px;top:92px;font-size:12px;color:#a0a0a0;">Work Plane</div>
<svg class="a" style="left:1280px;top:54px" width="30" height="32" viewBox="0 0 30 32"><rect x="3" y="13" width="22" height="12" fill="#f4f4f4" stroke="#333"/><rect x="15" y="4" width="10" height="21" fill="#f4f4f4" stroke="#333"/><rect x="3" y="4" width="10" height="10" fill="#f4f4f4" stroke="#333" stroke-dasharray="1,1"/><path d="M8,14v-7h-4l5,-6l5,6h-4v7z" fill="#1a78d8" stroke="#0a4a98" stroke-width="0.6"/></svg>
<div class="t" style="left:1215.0px;width:160px;text-align:center;top:91px;font-size:12px;color:#1e1e1e">Load into</div>
<div class="t" style="left:1215.0px;width:160px;text-align:center;top:106px;font-size:12px;color:#1e1e1e">Project</div>
<svg class="a" style="left:1355px;top:54px" width="34" height="34" viewBox="0 0 34 34"><rect x="3" y="15" width="22" height="11" fill="#f4f4f4" stroke="#333"/><rect x="15" y="4" width="10" height="22" fill="#f4f4f4" stroke="#333"/><rect x="3" y="4" width="10" height="10" fill="#f4f4f4" stroke="#333" stroke-dasharray="1,1"/><path d="M8,15v-8h-4l5,-6l5,6h-4v8z" fill="#1a78d8" stroke="#0a4a98" stroke-width="0.6"/><rect x="19" y="18" width="12" height="12" rx="1.5" fill="#d02020" stroke="#801010"/><path d="M22,21l6,6M28,21l-6,6" stroke="#fff" stroke-width="1.3"/></svg>
<div class="t" style="left:1292.0px;width:160px;text-align:center;top:91px;font-size:12px;color:#1e1e1e">Load into</div>
<div class="t" style="left:1292.0px;width:160px;text-align:center;top:106px;font-size:12px;color:#1e1e1e">Project and Close</div>
<!--/RIBBONCONTENT-->

<!-- OPTIONS BAR -->
<div class="a" style="left:0;top:145px;width:1920px;height:26px;background:#e4edd6"></div>
<div class="t" style="left:8px;top:151px;color:#9a9a9a">Modify</div>

<!-- VIEW TABS -->
<div class="a" style="left:369px;top:171px;width:1551px;height:24px;background:#cccccc"></div>
<!--VIEWTABS-->

<!-- LEFT PANEL -->
<div class="a" style="left:0;top:171px;width:364px;height:845px;background:#ffffff"></div>
<div class="a" style="left:364px;top:171px;width:2px;height:845px;background:#d6d6d6"></div>
<div class="a" style="left:366px;top:171px;width:3px;height:845px;background:#f4f4f4"></div>
<!--LEFTPANEL-->
<div class="a" style="left:0px;top:171px;width:364px;height:397px;background:#f0f0f0;"></div>
<div class="a" style="left:0;top:171px;width:369px;height:2px;background:#c8c8c8"></div>
<div class="t" style="left:3px;top:177px;font-size:12.5px;color:#333;">Properties</div>
<div class="a" style="left:3px;top:194px;width:355px;height:69px;background:#f6f6f6;border:1px solid #dadada"></div>
<div class="a" style="left:6px;top:197px;width:349px;height:63px;background:linear-gradient(#e8e8e8,#f8f8f8);"></div>
<svg class="a" style="left:20px;top:200px" width="30" height="56" viewBox="0 0 30 56"><path d="M2,4l6,-2h16v40l-6,6h-14c-2,-8 -2,-20 0,-28z" fill="#a4a4a4"/><path d="M2,4l6,-2v46h-4c-2,-8 -4,-30 -2,-44z" fill="#b8b8b8"/><circle cx="14" cy="14" r="4" fill="#efefef"/><path d="M8,20c4,6 10,6 14,2" stroke="#8a8a8a" fill="none"/></svg>
<div class="a" style="left:1px;top:266px;width:357px;height:23px;background:#f0f0f0;border:1px solid #a8a8a8"></div>
<div class="t" style="left:5px;top:270px;font-size:12px;color:#1e1e1e;">Reference Point</div>
<div class="a" style="left:0px;top:290px;width:358px;height:17px;background:#e1e1e1;"></div>
<div class="t" style="left:3px;top:292px;font-size:12px;color:#111;">Constraints</div>
<div class="a" style="left:0px;top:307px;width:358px;height:18px;background:#ffffff;border-bottom:1px dotted #b8b8b8"></div>
<div class="t" style="left:9px;top:309px;font-size:12px;color:#111;">Flipped</div>
<div class="a" style="left:0px;top:325px;width:358px;height:18px;background:#ffffff;border-bottom:1px dotted #b8b8b8"></div>
<div class="t" style="left:9px;top:327px;font-size:12px;color:#111;">Mirrored</div>
<div class="a" style="left:0px;top:343px;width:358px;height:18px;background:#ffffff;border-bottom:1px dotted #b8b8b8"></div>
<div class="t" style="left:9px;top:345px;font-size:12px;color:#111;">Rotate</div>
<div class="a" style="left:0px;top:361px;width:358px;height:18px;background:#ffffff;border-bottom:1px dotted #b8b8b8"></div>
<div class="t" style="left:9px;top:363px;font-size:12px;color:#7a7a7a;">Work Plane</div>
<div class="a" style="left:0px;top:379px;width:358px;height:17px;background:#e1e1e1;"></div>
<div class="t" style="left:3px;top:381px;font-size:12px;color:#111;">Graphics</div>
<div class="a" style="left:0px;top:396px;width:358px;height:18px;background:#ffffff;border-bottom:1px dotted #b8b8b8"></div>
<div class="t" style="left:9px;top:398px;font-size:12px;color:#111;">Show Reference Planes</div>
<div class="a" style="left:0px;top:414px;width:358px;height:18px;background:#ffffff;border-bottom:1px dotted #b8b8b8"></div>
<div class="t" style="left:9px;top:416px;font-size:12px;color:#111;">Visible</div>
<div class="a" style="left:0px;top:432px;width:358px;height:18px;background:#ffffff;border-bottom:1px dotted #b8b8b8"></div>
<div class="t" style="left:9px;top:434px;font-size:12px;color:#111;">Show Normal Reference Plane Only</div>
<div class="a" style="left:0px;top:450px;width:358px;height:18px;background:#ffffff;border-bottom:1px dotted #b8b8b8"></div>
<div class="t" style="left:9px;top:452px;font-size:12px;color:#111;">Visible in 3D</div>
<div class="a" style="left:0px;top:468px;width:358px;height:17px;background:#e1e1e1;"></div>
<div class="t" style="left:3px;top:470px;font-size:12px;color:#111;">Dimensions</div>
<div class="a" style="left:0px;top:485px;width:358px;height:18px;background:#ffffff;border-bottom:1px dotted #b8b8b8"></div>
<div class="t" style="left:9px;top:487px;font-size:12px;color:#111;">Driving Point</div>
<div class="a" style="left:0px;top:503px;width:358px;height:18px;background:#ffffff;border-bottom:1px dotted #b8b8b8"></div>
<div class="t" style="left:9px;top:505px;font-size:12px;color:#111;">Driven</div>
<div class="a" style="left:0px;top:521px;width:358px;height:18px;background:#ffffff;border-bottom:1px dotted #b8b8b8"></div>
<div class="t" style="left:9px;top:523px;font-size:12px;color:#7a7a7a;">Offset</div>
<div class="a" style="left:0px;top:539px;width:358px;height:17px;background:#e1e1e1;"></div>
<div class="t" style="left:3px;top:541px;font-size:12px;color:#111;">Adaptive Component</div>
<div class="a" style="left:0px;top:556px;width:358px;height:18px;background:#ffffff;border-bottom:1px dotted #b8b8b8"></div>
<div class="t" style="left:9px;top:558px;font-size:12px;color:#111;">Point</div>
<div class="a" style="left:0px;top:567px;width:364px;height:28px;background:#f0f0f0;"></div>
<div class="t" style="left:3px;top:572px;font-size:12px;color:#1a66cc;text-decoration:underline;">Properties help</div>
<div class="a" style="left:0px;top:594px;width:364px;height:3px;background:#d4d4d4;"></div>
<div class="a" style="left:0px;top:597px;width:364px;height:19px;background:#f0f0f0;"></div>
<div class="t" style="left:3px;top:600px;font-size:12.5px;color:#333;">Project Browser - geodesic tent.rfa</div>
<div class="a" style="left:0px;top:616px;width:364px;height:400px;background:#ffffff;"></div>
<div class="a" style="left:9px;top:632px;width:1px;height:228px;border-left:1px dotted #a0a0a0"></div>
<div class="a" style="left:29px;top:632px;width:1px;height:120px;border-left:1px dotted #a0a0a0"></div>
<div class="a" style="left:49px;top:757px;width:1px;height:66px;border-left:1px dotted #a0a0a0"></div><div class="a" style="left:49px;top:686px;width:1px;height:12px;border-left:1px dotted #a0a0a0"></div><div class="a" style="left:49px;top:722px;width:1px;height:12px;border-left:1px dotted #a0a0a0"></div>
<div class="a" style="left:18px;top:626px;width:4px;height:1px;border-top:1px dotted #a0a0a0"></div>
<div class="a" style="left:34px;top:644px;width:11px;height:1px;border-top:1px dotted #a0a0a0"></div>
<div class="a" style="left:34px;top:680px;width:11px;height:1px;border-top:1px dotted #a0a0a0"></div>
<div class="a" style="left:34px;top:716px;width:11px;height:1px;border-top:1px dotted #a0a0a0"></div>
<div class="a" style="left:34px;top:751px;width:11px;height:1px;border-top:1px dotted #a0a0a0"></div>
<div class="a" style="left:49px;top:698px;width:15px;height:1px;border-top:1px dotted #a0a0a0"></div>
<div class="a" style="left:49px;top:734px;width:15px;height:1px;border-top:1px dotted #a0a0a0"></div>
<div class="a" style="left:49px;top:770px;width:15px;height:1px;border-top:1px dotted #a0a0a0"></div>
<div class="a" style="left:49px;top:788px;width:15px;height:1px;border-top:1px dotted #a0a0a0"></div>
<div class="a" style="left:49px;top:806px;width:15px;height:1px;border-top:1px dotted #a0a0a0"></div>
<div class="a" style="left:49px;top:824px;width:15px;height:1px;border-top:1px dotted #a0a0a0"></div>
<div class="a" style="left:9px;top:842px;width:10px;height:1px;border-top:1px dotted #a0a0a0"></div>
<div class="a" style="left:18px;top:859px;width:4px;height:1px;border-top:1px dotted #a0a0a0"></div>
<svg class="a" style="left:5px;top:622px" width="9" height="9" viewBox="0 0 9 9"><rect x="0.5" y="0.5" width="8" height="8" fill="#fff" stroke="#8a8a8a"/><path d="M2,4.5h5" stroke="#3a4a9a"/></svg>
<svg class="a" style="left:25px;top:640px" width="9" height="9" viewBox="0 0 9 9"><rect x="0.5" y="0.5" width="8" height="8" fill="#fff" stroke="#8a8a8a"/><path d="M2,4.5h5" stroke="#3a4a9a"/></svg>
<svg class="a" style="left:25px;top:676px" width="9" height="9" viewBox="0 0 9 9"><rect x="0.5" y="0.5" width="8" height="8" fill="#fff" stroke="#8a8a8a"/><path d="M2,4.5h5" stroke="#3a4a9a"/></svg>
<svg class="a" style="left:25px;top:712px" width="9" height="9" viewBox="0 0 9 9"><rect x="0.5" y="0.5" width="8" height="8" fill="#fff" stroke="#8a8a8a"/><path d="M2,4.5h5" stroke="#3a4a9a"/></svg>
<svg class="a" style="left:25px;top:747px" width="9" height="9" viewBox="0 0 9 9"><rect x="0.5" y="0.5" width="8" height="8" fill="#fff" stroke="#8a8a8a"/><path d="M2,4.5h5" stroke="#3a4a9a"/></svg>
<svg class="a" style="left:5px;top:855px" width="9" height="9" viewBox="0 0 9 9"><rect x="0.5" y="0.5" width="8" height="8" fill="#fff" stroke="#8a8a8a"/><path d="M2,4.5h5" stroke="#3a4a9a"/><path d="M4.5,2v5" stroke="#3a4a9a"/></svg>
<svg class="a" style="left:21px;top:618px" width="16" height="16" viewBox="0 0 16 16"><path d="M1,4v-3h3M12,1h3v3M15,12v3h-3M4,15h-3v-3" stroke="#222" fill="none" stroke-width="1.2"/><path d="M4,6l4,-2l4,2v5l-4,2l-4,-2z" fill="#f0f0f0" stroke="#333" stroke-width="0.9"/></svg>
<div class="t" style="left:47px;top:637px;font-size:12px;color:#1e1e1e;">Views (all)</div>
<div class="t" style="left:47px;top:673px;font-size:12px;color:#1e1e1e;">Floor Plan</div>
<div class="t" style="left:67px;top:689px;font-size:12px;color:#1e1e1e;">Ref. Level</div>
<div class="t" style="left:47px;top:709px;font-size:12px;color:#1e1e1e;">3D Views</div>
<div class="t" style="left:67px;top:726px;font-size:12px;color:#1e1e1e;font-weight:bold;">{3D}</div>
<div class="t" style="left:47px;top:744px;font-size:12px;color:#1e1e1e;">Elevations (Elevation 1)</div>
<div class="t" style="left:67px;top:762px;font-size:12px;color:#1e1e1e;">Back</div>
<div class="t" style="left:67px;top:780px;font-size:12px;color:#1e1e1e;">Front</div>
<div class="t" style="left:67px;top:798px;font-size:12px;color:#1e1e1e;">Left</div>
<div class="t" style="left:67px;top:816px;font-size:12px;color:#1e1e1e;">Right</div>
<svg class="a" style="left:20px;top:833px" width="17" height="16" viewBox="0 0 17 16"><rect x="1" y="1" width="15" height="14" fill="#fff" stroke="#444"/><path d="M3,8h6v5h-6zM4,4h3M11,4h3" stroke="#444" fill="none"/></svg>
<div class="t" style="left:43px;top:834px;font-size:12px;color:#1e1e1e;">Sheets (all)</div>
<svg class="a" style="left:21px;top:851px" width="16" height="16" viewBox="0 0 16 16"><rect x="1" y="5" width="14" height="10" fill="#fff" stroke="#444"/><rect x="8" y="1" width="7" height="14" fill="#fff" stroke="#444"/></svg>
<div class="t" style="left:43px;top:852px;font-size:12px;color:#1e1e1e;">Families</div>
<!--/LEFTPANEL-->

<!-- VIEWPORT -->
<div class="a" style="left:369px;top:196px;width:1533px;height:801px;background:linear-gradient(#808080,#bfbfbf)"></div>
<div class="a" style="left:1903px;top:195px;width:1px;height:802px;background:#ffffff"></div>
<div class="a" style="left:1904px;top:195px;width:16px;height:802px;background:#efefef"></div>
<div class="a" style="left:1904px;top:588px;width:15px;height:17px;background:#cccccc"></div>
<svg class="a" style="left:0;top:0" width="1920" height="1080" viewBox="0 0 1920 1080">
<defs>
<clipPath id="vp"><rect x="369" y="195" width="1534" height="802"/></clipPath>
<linearGradient id="pg" gradientUnits="userSpaceOnUse" x1="650" y1="600" x2="1400" y2="600">
<stop offset="0" stop-color="rgb(81,91,202)"/><stop offset="0.333" stop-color="rgb(76,86,191)"/><stop offset="0.467" stop-color="rgb(71,80,179)"/><stop offset="0.6" stop-color="rgb(67,75,168)"/><stop offset="0.707" stop-color="rgb(64,72,158)"/><stop offset="1" stop-color="rgb(63,71,155)"/></linearGradient>
</defs>
<g clip-path="url(#vp)">
<!-- right light face -->
<polygon fill="#525ccc" points="1346,313 1430,290 1500,268 1562,252 1623,235 1685,215 1747,195 1910,195 1910,1000 1444,1000 1256,907 1421,617"/>
<!-- petal -->
<polygon fill="url(#pg)" points="583,677 620,666 652,656 700,641 747,627 794,609 841,591 888,569 934,547 981,527 1040,497 1100,467 1147,438 1194,410 1246,382 1289,355 1320,335 1346,314 1421,617 1256,907 1170,899 1110,892 1057,884 1000,873 945,861 890,845 832,827 790,812 739,794 669,766 625,745 578,722 590,700"/>
<!-- edges -->
<g fill="none" stroke="#000" stroke-width="1.1">
<polyline points="583,677 620,666 652,656 700,641 747,627 794,609 841,591 888,569 934,547 981,527 1040,497 1100,467 1147,438 1194,410 1246,382 1289,355 1320,335 1346,314 1430,290 1500,268 1562,252 1623,235 1685,215 1747,195"/>
<polyline points="1346,313 1421,617 1256,907 1444,997"/>
<polyline points="1421,617 1905,650"/>
<polyline points="578,722 625,745 669,766 739,794 790,812 832,827 890,845 945,861 1000,873 1057,884 1110,892 1170,899 1256,907"/>
<polyline points="590,701 640,710 699,719 760,726 814,732 880,733 945,732 1000,727 1057,721 1120,710 1176,698 1230,684 1283,669 1335,652 1378,637 1421,618"/>
</g>
<g fill="none" stroke="#1f8a1f" stroke-width="1" stroke-dasharray="14,10" transform="translate(0,1)">
<polyline points="652,656 700,641 747,627 794,609 841,591 888,569 934,547 981,527 1040,497 1100,467 1147,438 1194,410 1246,382 1289,355"/>
<polyline points="669,766 739,794 790,812 832,827 890,845 945,861 1000,873 1057,884 1110,892 1170,899"/>
<polyline points="699,719 760,726 814,732 880,733 945,732 1000,727 1057,721 1120,710 1176,698 1230,684 1283,669 1335,652"/>
</g>
<!-- light blue ref lines -->
<g fill="none" stroke="#80a8ff" stroke-width="1">
<line x1="672" y1="618" x2="1790" y2="289"/>
<line x1="642" y1="656" x2="878" y2="997"/>
<line x1="1010" y1="997" x2="1905" y2="730"/>
</g>
<!-- green lines -->
<g fill="none" stroke="#1f8a1f" stroke-width="1">
<line x1="522" y1="765" x2="612" y2="739"/>
<line x1="522" y1="765" x2="691" y2="775"/>
<line x1="522" y1="765" x2="1011" y2="996"/>
</g>
<!-- dots -->
<g fill="#000">
<circle cx="578" cy="722" r="6"/><circle cx="1257" cy="907" r="5.5"/><circle cx="670" cy="766" r="6"/>
<circle cx="584" cy="746" r="3.5"/><circle cx="590" cy="769" r="3.5"/><circle cx="579" cy="790" r="3.5"/><circle cx="670" cy="834" r="3.5"/>
<circle cx="584" cy="677" r="5.2"/><path d="M583,702 a6,6 0 0 1 12,0z"/>
<path d="M694,721 a6,6 0 0 1 12,0z"/><path d="M1340,316 a6,6 0 0 1 12,0z"/><path d="M1415,620 a6,6 0 0 1 12,0z"/>
</g>
<!-- workplane symbols -->
<g fill="rgba(150,200,225,0.45)" stroke="#2aa8e0" stroke-width="1">
<polygon points="491,756 544,740 555,772 501,789"/>
<polygon points="513,732 531,747 532,797 514,782"/>
<polygon points="650,758 689,728 689,748 652,807"/>
<polygon points="650,775 691,775 670,790"/>
</g>
<g stroke="#2aa8e0" stroke-width="0.8" fill="none">
<line x1="497" y1="772" x2="549" y2="756"/><line x1="517" y1="750" x2="528" y2="782"/>
<line x1="670" y1="743" x2="670" y2="792"/>
</g>
<circle cx="522" cy="765" r="4.5" fill="#22ccff"/>
<circle cx="670" cy="766" r="6" fill="#000"/>
<text x="516" y="745" font-size="11" font-weight="bold" fill="#1a2a7a" font-family="Liberation Sans">2</text>
<!-- gizmo -->
<polygon points="674,605 702,652 703,668 676,625" fill="rgba(160,175,210,0.55)" stroke="#2a40c0" stroke-width="0.8"/>
<polygon points="661,607 682,622 670,630" fill="#3cd03c" stroke="#1a8a1a" stroke-width="0.8"/>
<line x1="688" y1="648" x2="716" y2="638" stroke="#7a1010" stroke-width="1.2"/>
<polygon points="748,629 727,627 730,640" fill="#d0203a" stroke="#801010" stroke-width="0.8"/>
<line x1="677" y1="640" x2="684" y2="660" stroke="#7a1a1a" stroke-width="1.2"/>
<line x1="688" y1="652" x2="688" y2="680" stroke="#101060" stroke-width="1.6"/>
<polygon points="682,679 694,679 688,697" fill="#2030e0" stroke="#101080" stroke-width="0.6"/>
<path d="M681,647 a7,6 0 0 1 14,0z" fill="#1040d0"/>
<path d="M701,636l7,7l-6,5" fill="none" stroke="#3a3ac0" stroke-width="1"/>
<path d="M705,650v10h-4" fill="none" stroke="#22aa22" stroke-width="1.2"/>
<!-- dimension labels -->
<text x="0" y="0" font-size="12" fill="#2a5ae8" font-family="Liberation Sans" transform="translate(1210,447) rotate(-15)">1368.8</text>
<path d="M1225.5,460 v10 M1238.5,460 v10 M1225,465 h14" stroke="#2a5ae8" stroke-width="1" fill="none"/>
<text x="0" y="0" font-size="12.5" fill="#2050d0" font-family="Liberation Sans" transform="translate(776,826) rotate(57)">680.0</text>
<path d="M758.5,847 v10 M771.5,847 v10 M758,852 h14" stroke="#2050d0" stroke-width="1" fill="none"/>
<!-- small ref point -->
<circle cx="1790" cy="289" r="3" fill="#3a8ae0" stroke="#1a3a80" stroke-width="0.8"/>
<circle cx="650" cy="658" r="3.2" fill="#8ab8e8" stroke="#4a7ab0" stroke-width="0.8"/>
</g>
<!-- viewcube -->
<g>
<polygon points="1811,228 1854,218 1878,244 1828,258" fill="#a7aad9" stroke="#8c8a78" stroke-width="0.8"/>
<polygon points="1811,228 1828,258 1831,294 1814,265" fill="#9ea1d2" stroke="#8c8a78" stroke-width="0.8"/>
<polygon points="1828,258 1878,244 1873,280 1831,294" fill="#a3a6d6" stroke="#8c8a78" stroke-width="0.8"/>
<text font-size="10" fill="#707088" font-family="Liberation Sans" font-weight="bold" transform="translate(1833,247) rotate(-18)">TOP</text>
<text font-size="10.5" fill="#707088" font-family="Liberation Sans" font-weight="bold" font-style="italic" transform="translate(1837,279) rotate(-17)">FRONT</text>
</g>
<!-- nav bar -->
<rect x="1868" y="316" width="32" height="114" rx="4" fill="rgba(160,165,220,0.75)" stroke="#5a60b0" stroke-width="0.8"/>
<circle cx="1882" cy="346" r="8" fill="#c8c8d8" stroke="#707090" stroke-width="1"/>
<rect x="1886" y="350" width="9" height="9" fill="#5a9ad8" stroke="#2a5a98" stroke-width="0.7"/>
<line x1="1872" y1="373" x2="1897" y2="373" stroke="#7a80b8" stroke-width="1"/>
<rect x="1877" y="384" width="10" height="9" fill="none" stroke="#6a70a0" stroke-width="1"/>
<circle cx="1888" cy="392" r="3" fill="#d0d0e0" stroke="#6a70a0" stroke-width="1"/>
<circle cx="1894" cy="322" r="3" fill="#eee" stroke="#7a80a8" stroke-width="0.7"/><path d="M1881,367h6l-3,3z M1881,409h6l-3,3z" fill="#5a5a7a"/>
<circle cx="1894" cy="424" r="3" fill="#eee" stroke="#7a80a8" stroke-width="0.7"/>
</svg>

<!-- VIEW BAR -->
<div class="a" style="left:369px;top:997px;width:1551px;height:17px;background:#efefef"></div>
<div class="a" style="left:369px;top:1014px;width:1551px;height:2px;background:#ffffff"></div>
<!--VIEWBAR-->

<!-- STATUS BAR -->
<div class="a" style="left:0;top:1016px;width:1920px;height:24px;background:#cccccc"></div>
<div class="t" style="left:2px;top:1021px;font-size:11.4px;color:#111">Click to select, TAB for alternates, CTRL adds, SHIFT unselects.</div>
<!--STATUS-->

<!-- TASKBAR -->
<div class="a" style="left:0;top:1040px;width:1920px;height:40px;background:#0b0b0b"></div>
<!--TASKBAR-->
<div class="a" style="left:369px;top:193px;width:1534px;height:2px;background:#ffffff;"></div>
<div class="t" style="left:530px;top:177px;font-size:12px;color:#333;clip-path:inset(0 0 0 5px);margin-left:-5px;">{3D}</div>
<svg class="a" style="left:628px;top:175px" width="16" height="16" viewBox="0 0 16 16"><path d="M2,7l6,-5l6,3v7l-6,3l-6,-3z" fill="#e8e8e8" stroke="#555" stroke-width="1"/><path d="M2,7l6,3l6,-4M8,10v5" stroke="#555" fill="none"/><path d="M4,5.5l6,-3.5" stroke="#555"/></svg>
<div class="t" style="left:652px;top:177px;font-size:12px;color:#333;">{3D}</div>
<svg class="a" style="left:757px;top:175px" width="16" height="16" viewBox="0 0 16 16"><rect x="1" y="5" width="13" height="10" fill="#eee" stroke="#777"/><rect x="7" y="1" width="7" height="14" fill="#eee" stroke="#777"/><path d="M9,3h3" stroke="#777"/></svg>
<div class="t" style="left:779px;top:177px;font-size:12px;color:#333;">Ref. Level</div>
<div class="a" style="left:879px;top:173px;width:128px;height:21px;background:#ffffff;"></div>
<svg class="a" style="left:883px;top:175px" width="16" height="16" viewBox="0 0 16 16"><path d="M2,7l6,-5l6,3v7l-6,3l-6,-3z" fill="#dde" stroke="#333" stroke-width="1.1"/><path d="M2,7l6,3l6,-4M8,10v5" stroke="#333" fill="none"/><path d="M4,5.5l6,-3.5" stroke="#333"/></svg>
<div class="t" style="left:907px;top:177px;font-size:12px;color:#111;">{3D}</div>
<svg class="a" style="left:990px;top:177px" width="12" height="12" viewBox="0 0 12 12"><path d="M1.5,1.5l9,9M10.5,1.5l-9,9" stroke="#111" stroke-width="1.6"/></svg>
<svg class="a" style="left:1905px;top:178px" width="12" height="10" viewBox="0 0 12 10"><path d="M1,1h10" stroke="#333" stroke-width="1.5"/><path d="M1,4h10l-5,5z" fill="#333"/></svg>
<svg class="a" style="left:1906px;top:200px" width="12" height="8" viewBox="0 0 12 8"><path d="M2,6l4,-4l4,4" stroke="#444" stroke-width="1.6" fill="none"/></svg>
<svg class="a" style="left:1906px;top:985px" width="12" height="8" viewBox="0 0 12 8"><path d="M2,2l4,4l4,-4" stroke="#444" stroke-width="1.6" fill="none"/></svg>
<div class="t" style="left:396px;top:999px;font-size:11.5px;color:#111;">1 : 20</div>
<svg class="a" style="left:447px;top:998px" width="16" height="14" viewBox="0 0 16 14"><rect x="1" y="1" width="14" height="11" rx="1" fill="#fff" stroke="#333" stroke-width="1.2"/><rect x="4" y="4" width="8" height="5" fill="#777"/><path d="M1,4h3M12,4h3" stroke="#555" stroke-width="2"/></svg>
<svg class="a" style="left:468px;top:998px" width="18" height="14" viewBox="0 0 18 14"><path d="M2,5l4,-3h10v8l-3,3h-11z" fill="#dbeaf8" stroke="#1a6fd0" stroke-width="1.1"/><path d="M3,8h10" stroke="#e02020"/><path d="M3,10h10" stroke="#22aa22"/></svg>
<svg class="a" style="left:490px;top:998px" width="18" height="14" viewBox="0 0 18 14"><path d="M2,6h6v7h-6z" fill="none" stroke="#1a6fd0"/><path d="M9,5l7,7M16,5l-7,7" stroke="#e02020" stroke-width="1.6"/><path d="M1,12h4" stroke="#444"/></svg>
<svg class="a" style="left:512px;top:998px" width="18" height="14" viewBox="0 0 18 14"><path d="M2,6h6v7h-6z" fill="none" stroke="#1a6fd0"/><circle cx="13" cy="7" r="3" fill="none" stroke="#1a6fd0"/><path d="M13,10v3" stroke="#1a6fd0"/></svg>
<svg class="a" style="left:533px;top:998px" width="16" height="14" viewBox="0 0 16 14"><path d="M1,7l7,-6l7,6v7h-14z" fill="#eee" stroke="#444"/><circle cx="10" cy="10" r="3" fill="#fff" stroke="#444"/></svg>
<svg class="a" style="left:553px;top:998px" width="16" height="14" viewBox="0 0 16 14"><path d="M1,5l4,5l4,-5l4,5l2,-2" stroke="#333" fill="none" stroke-width="1.2"/><circle cx="13" cy="11" r="2" fill="#fff" stroke="#333"/></svg>
<svg class="a" style="left:572px;top:998px" width="18" height="14" viewBox="0 0 18 14"><path d="M2,1v12M16,1v12M2,4h14M2,10h14" stroke="#333" fill="none"/><rect x="5" y="5" width="8" height="4" fill="#ddd" stroke="#333"/></svg>
<svg class="a" style="left:594px;top:998px" width="18" height="14" viewBox="0 0 18 14"><rect x="1" y="2" width="14" height="10" fill="#fff" stroke="#333"/><path d="M3,5h8M3,8h8" stroke="#555"/><rect x="11" y="7" width="6" height="6" fill="#6aa0d8" stroke="#1a4a88"/></svg>
<svg class="a" style="left:618px;top:1000px" width="8" height="10" viewBox="0 0 8 10"><path d="M6,1l-4,4l4,4" stroke="#333" stroke-width="1.5" fill="none"/></svg>
<div class="a" style="left:1249px;top:998px;width:19px;height:15px;background:#cccccc;"></div>
<svg class="a" style="left:1889px;top:1000px" width="8" height="10" viewBox="0 0 8 10"><path d="M2,1l4,4l-4,4" stroke="#333" stroke-width="1.5" fill="none"/></svg>
<svg class="a" style="left:1668px;top:1019px" width="18" height="18" viewBox="0 0 18 18"><path d="M2,7c0,-4 8,-4 8,0c0,4 -8,4 -8,0zM8,7c0,-4 8,-4 8,0c0,4 -8,4 -8,0" fill="none" stroke="#e0a020" stroke-width="2"/><path d="M7,5v10l2,-2l2,4l1.5,-0.8l-2,-3.8h3z" fill="#fff" stroke="#333" stroke-width="0.8"/></svg>
<svg class="a" style="left:1693px;top:1019px" width="18" height="18" viewBox="0 0 18 18"><path d="M1,13l5,-9h10l-5,9z" fill="#dbeaf8" stroke="#1a6fd0" stroke-width="1.2"/><path d="M1,9h10" stroke="#1a6fd0"/><path d="M10,5v10l2,-2l2,4l1.5,-0.8l-2,-3.8h3z" fill="#fff" stroke="#333" stroke-width="0.8"/></svg>
<svg class="a" style="left:1719px;top:1019px" width="18" height="18" viewBox="0 0 18 18"><path d="M3,2h7v3l-2,2h-3l-2,-2z" fill="#f08040" stroke="#a04010"/><path d="M6,7v10" stroke="#444"/><path d="M10,5v10l2,-2l2,4l1.5,-0.8l-2,-3.8h3z" fill="#fff" stroke="#333" stroke-width="0.8"/></svg>
<svg class="a" style="left:1745px;top:1019px" width="18" height="18" viewBox="0 0 18 18"><path d="M2,4l5,-2v12l-5,2z" fill="#cfe6fa" stroke="#1a6fd0"/><path d="M10,2l6,6M16,2l-6,6" stroke="#e02020" stroke-width="1.6"/><path d="M9,6v10l2,-2l2,4l1.5,-0.8l-2,-3.8h3z" fill="#fff" stroke="#333" stroke-width="0.8"/></svg>
<svg class="a" style="left:1771px;top:1019px" width="18" height="18" viewBox="0 0 18 18"><path d="M5,1v9M1,5h9M5,1l-2,2M5,1l2,2" stroke="#222" fill="none" stroke-width="1.2"/><path d="M9,6v10l2,-2l2,4l1.5,-0.8l-2,-3.8h3z" fill="#fff" stroke="#333" stroke-width="0.8"/></svg>
<svg class="a" style="left:1797px;top:1019px" width="18" height="18" viewBox="0 0 18 18"><circle cx="8" cy="9" r="6" fill="none" stroke="#bbb" stroke-width="2.5" stroke-dasharray="2,1.5"/></svg>
<svg class="a" style="left:1820px;top:1019px" width="18" height="18" viewBox="0 0 18 18"><path d="M1,2h15l-6,7v6l-3,2v-8z" fill="#cfd8e0" stroke="#333" stroke-width="1.1"/></svg>
<div class="t" style="left:1836px;top:1021px;font-size:12px;color:#333;">:1</div>
<svg class="a" style="left:16px;top:1051px" width="20" height="20" viewBox="0 0 20 20"><path d="M1,3l7,-1v8h-7zM9,2l10,-1.5v9.5h-10zM1,11h7v8l-7,-1zM9,11h10v9.5l-10,-1.5z" fill="#fff"/></svg>
<svg class="a" style="left:61px;top:1050px" width="22" height="22" viewBox="0 0 22 22"><circle cx="11" cy="11" r="8" fill="none" stroke="#fff" stroke-width="2"/></svg>
<svg class="a" style="left:109px;top:1050px" width="22" height="22" viewBox="0 0 22 22"><rect x="3" y="5" width="12" height="12" fill="none" stroke="#fff" stroke-width="1.6"/><path d="M1,3h16M1,19h16M19,3v16" stroke="#fff" stroke-width="1.6"/></svg>
<svg class="a" style="left:159px;top:1048px" width="26" height="26" viewBox="0 0 26 26"><circle cx="12" cy="12" r="11" fill="#db4437"/><path d="M12,12L2.5,17.5A11,11 0 0 0 18,21.5z" fill="#0f9d58"/><path d="M12,12L18,21.5A11,11 0 0 0 21.5,6.5H12z" fill="#f4b400"/><circle cx="12" cy="12" r="5" fill="#fff"/><circle cx="12" cy="12" r="4" fill="#4285f4"/><ellipse cx="18" cy="19" rx="4" ry="5" fill="#eee" stroke="#888" stroke-width="0.6"/><ellipse cx="16.5" cy="18.5" rx="1.2" ry="0.8" fill="#222"/><ellipse cx="19.5" cy="18.5" rx="1.2" ry="0.8" fill="#222"/></svg>
<svg class="a" style="left:207px;top:1049px" width="26" height="24" viewBox="0 0 26 24"><path d="M2,3h8l2,2h12v16h-22z" fill="#f2c040"/><path d="M2,8h22v13h-22z" fill="#f8d868"/><rect x="8" y="13" width="10" height="3" fill="#2a90e0"/><rect x="10" y="16" width="2" height="5" fill="#2a90e0"/><rect x="14" y="16" width="2" height="5" fill="#2a90e0"/></svg>
<div class="a" style="left:245px;top:1040px;width:48px;height:40px;background:#2e2e2e;"></div>
<div class="a" style="left:257px;top:1048px;width:24px;height:24px;background:#dfe8f4;"></div>
<svg class="a" style="left:259px;top:1050px" width="20" height="20" viewBox="0 0 20 20"><path d="M4,2h7c4,0 6,2 6,5c0,3 -2,4 -3.5,4.5l4,6.5h-4.5l-3.5,-6h-1.5v6h-4z" fill="#2a5a9a"/><path d="M8,5h2.5c1.5,0 2.5,0.8 2.5,2c0,1.2 -1,2 -2.5,2h-2.5z" fill="#dfe8f4"/><path d="M8,11l4.5,7h4l-4,-7z" fill="#3a90d8"/></svg>
<div class="a" style="left:151px;top:1077px;width:40px;height:3px;background:#8a8a8a;"></div>
<div class="a" style="left:200px;top:1077px;width:40px;height:3px;background:#8a8a8a;"></div>
<div class="a" style="left:245px;top:1077px;width:48px;height:3px;background:#9a9a9a;"></div>
<svg class="a" style="left:1756px;top:1053px" width="16" height="12" viewBox="0 0 16 12"><path d="M2,9l6,-6l6,6" stroke="#fff" stroke-width="1.4" fill="none"/></svg>
<svg class="a" style="left:1781px;top:1050px" width="20" height="18" viewBox="0 0 20 18"><rect x="3" y="4" width="15" height="10" fill="none" stroke="#fff" stroke-width="1.2"/><path d="M10,14v3M6,17h8" stroke="#fff" stroke-width="1.2"/><rect x="1" y="1" width="5" height="5" fill="#111" stroke="#fff" stroke-width="1"/></svg>
<div class="t" style="left:1811px;top:1044px;font-size:11.5px;color:#fff;">10:01 PM</div>
<div class="t" style="left:1808px;top:1061px;font-size:11.5px;color:#fff;">19-Sep-19</div>
<svg class="a" style="left:1876px;top:1048px" width="30" height="28" viewBox="0 0 30 28"><path d="M3,3h16v11h-10l-4,4v-4h-2z" fill="#fff"/><path d="M6,6h10M6,9h10M6,12h7" stroke="#111" stroke-width="1"/><circle cx="20" cy="19" r="7" fill="#2a2a2a" stroke="#888" stroke-width="1"/><text x="14.5" y="23" font-size="10" font-weight="bold" fill="#fff" font-family="Liberation Sans">21</text></svg>
<div class="a" style="left:1914px;top:1042px;width:1px;height:38px;background:#555;"></div>
<!--/TASKBAR-->

<!-- DIALOG -->
<div class="a" style="left:35px;top:140px;width:496px;height:550px;background:#f0f0f0;border-top:1px solid #3a3a3a;border-bottom:1px solid #5a5a5a"></div>
<div class="a" style="left:35px;top:141px;width:496px;height:31px;background:#ffffff"></div>
<div class="t" style="left:43px;top:150px;font-size:12px;color:#000">Family Types</div>
<svg class="a" style="left:510px;top:149px" width="14" height="14"><path d="M1,1L13,13M13,1L1,13" stroke="#111" stroke-width="1.2"/></svg>
<div class="t" style="left:46px;top:188px;font-size:11.5px;color:#000">Type name:</div>
<div class="a" style="left:116px;top:185px;width:312px;height:21px;background:#cccccc"></div>
<svg class="a" style="left:412px;top:192px" width="12" height="8"><path d="M1,1L6,6L11,1" stroke="#9a9a9a" stroke-width="1" fill="none"/></svg>
<div class="a" style="left:433px;top:185px;width:27px;height:23px;background:#cfe3f5;border:1px solid #a8cdef"></div>
<svg class="a" style="left:436px;top:186px" width="20" height="20"><path d="M6,6h6l4,4v9h-10z" fill="#fff" stroke="#333" stroke-width="1"/><circle cx="5" cy="5" r="2.5" fill="#f08010"/></svg>
<svg class="a" style="left:467px;top:188px" width="18" height="16"><rect x="1" y="2" width="15" height="12" fill="#fff" stroke="#555"/><rect x="3" y="4" width="8" height="8" fill="#6aa0d8"/></svg>
<svg class="a" style="left:497px;top:186px" width="20" height="20"><path d="M7,7h6l4,4v8h-10z" fill="#fff" stroke="#888" stroke-width="1"/><path d="M2,2l6,6M8,2l-6,6" stroke="#e04040" stroke-width="1.3"/></svg>
<div class="a" style="left:46px;top:218px;width:476px;height:20px;background:#fff;border:1px solid #8a8a8a"></div>
<div class="t" style="left:49px;top:221px;font-size:11px;color:#6a6a6a;letter-spacing:-0.2px">Search parameters</div>
<svg class="a" style="left:502px;top:219px" width="18" height="18"><circle cx="7.5" cy="7.5" r="5.5" fill="#eef4fa" stroke="#444" stroke-width="1.2"/><path d="M11.5,11.5l5,5" stroke="#333" stroke-width="2.2"/></svg>
<div class="a" style="left:46px;top:248px;width:474px;height:358px;background:#ffffff;border:1px dotted #8a8a8a;border-left:2px solid #606060"></div>
<div class="a" style="left:47px;top:248px;width:472px;height:22px;background:#f0f0f0;border:1.5px solid #111"></div>
<div class="a" style="left:170px;top:249px;width:1px;height:20px;background:#111"></div>
<div class="a" style="left:251px;top:249px;width:1px;height:20px;background:#111"></div>
<div class="a" style="left:403px;top:249px;width:1px;height:20px;background:#111"></div>
<div class="t" style="left:49px;width:120px;text-align:center;top:252px;font-size:12px;color:#000">Parameter</div>
<div class="t" style="left:151px;width:120px;text-align:center;top:252px;font-size:12px;color:#000">Value</div>
<div class="t" style="left:267px;width:120px;text-align:center;top:252px;font-size:12px;color:#000">Formula</div>
<div class="t" style="left:401px;width:120px;text-align:center;top:252px;font-size:12px;color:#000">Lock</div>
<div class="a" style="left:48px;top:272px;width:471px;height:19px;background:#98b3d3"></div>
<div class="t" style="left:50px;top:275px;font-size:12px;font-weight:bold;color:#000">Constraints</div>
<svg class="a" style="left:505px;top:277px" width="8" height="10"><path d="M1,4L4,1L7,4M1,8L4,5L7,8" stroke="#111" stroke-width="1.3" fill="none"/></svg>
<div class="a" style="left:48px;top:309px;width:471px;height:1px;border-top:1px dotted #9a9a9a"></div>
<div class="a" style="left:170px;top:292px;width:1px;height:18px;border-left:1px dotted #9a9a9a"></div>
<div class="a" style="left:251px;top:292px;width:1px;height:18px;border-left:1px dotted #9a9a9a"></div>
<div class="a" style="left:403px;top:292px;width:1px;height:18px;border-left:1px dotted #9a9a9a"></div>
<div class="a" style="left:518px;top:292px;width:1px;height:18px;border-left:1px dotted #9a9a9a"></div>
<div class="t" style="left:50px;top:293px;font-size:12px;color:#000">Default Elevation</div>
<div class="a" style="left:171px;top:292px;width:80px;height:18px;background:#fff;border:1.5px solid #111"></div>
<div class="t" style="left:173px;top:293px;font-size:12px;color:#000">0.0</div>
<div class="t" style="left:253px;top:293px;font-size:12px;color:#000">=</div>
<div class="a" style="left:407px;top:295px;width:13px;height:13px;background:#fff;border:1px solid #333"></div>
<div class="a" style="left:48px;top:312px;width:471px;height:19px;background:#98b3d3"></div>
<div class="t" style="left:50px;top:315px;font-size:12px;font-weight:bold;color:#000">Materials and Finishes</div>
<svg class="a" style="left:505px;top:317px" width="8" height="10"><path d="M1,4L4,1L7,4M1,8L4,5L7,8" stroke="#111" stroke-width="1.3" fill="none"/></svg>
<div class="a" style="left:48px;top:349px;width:471px;height:1px;border-top:1px dotted #9a9a9a"></div>
<div class="a" style="left:170px;top:332px;width:1px;height:18px;border-left:1px dotted #9a9a9a"></div>
<div class="a" style="left:251px;top:332px;width:1px;height:18px;border-left:1px dotted #9a9a9a"></div>
<div class="a" style="left:403px;top:332px;width:1px;height:18px;border-left:1px dotted #9a9a9a"></div>
<div class="a" style="left:518px;top:332px;width:1px;height:18px;border-left:1px dotted #9a9a9a"></div>
<div class="t" style="left:50px;top:333px;font-size:12px;color:#000">Tent</div>
<div class="t" style="left:173px;top:333px;font-size:12px;color:#000">Tent</div>
<div class="t" style="left:253px;top:333px;font-size:12px;color:#000">=</div>
<div class="a" style="left:48px;top:352px;width:471px;height:19px;background:#98b3d3"></div>
<div class="t" style="left:50px;top:355px;font-size:12px;font-weight:bold;color:#000">Dimensions</div>
<svg class="a" style="left:505px;top:357px" width="8" height="10"><path d="M1,4L4,1L7,4M1,8L4,5L7,8" stroke="#111" stroke-width="1.3" fill="none"/></svg>
<div class="a" style="left:48px;top:389px;width:471px;height:1px;border-top:1px dotted #9a9a9a"></div>
<div class="a" style="left:170px;top:372px;width:1px;height:18px;border-left:1px dotted #9a9a9a"></div>
<div class="a" style="left:251px;top:372px;width:1px;height:18px;border-left:1px dotted #9a9a9a"></div>
<div class="a" style="left:403px;top:372px;width:1px;height:18px;border-left:1px dotted #9a9a9a"></div>
<div class="a" style="left:518px;top:372px;width:1px;height:18px;border-left:1px dotted #9a9a9a"></div>
<div class="t" style="left:50px;top:373px;font-size:12px;color:#7a7a7a">H_center</div>
<div class="t" style="left:173px;top:373px;font-size:12px;color:#7a7a7a">300.0</div>
<div class="t" style="left:253px;top:373px;font-size:12px;color:#000">= 300 mm</div>
<div class="a" style="left:407px;top:375px;width:13px;height:13px;background:#fff;border:1px solid #333"></div>
<div class="a" style="left:48px;top:407px;width:471px;height:1px;border-top:1px dotted #9a9a9a"></div>
<div class="a" style="left:170px;top:390px;width:1px;height:18px;border-left:1px dotted #9a9a9a"></div>
<div class="a" style="left:251px;top:390px;width:1px;height:18px;border-left:1px dotted #9a9a9a"></div>
<div class="a" style="left:403px;top:390px;width:1px;height:18px;border-left:1px dotted #9a9a9a"></div>
<div class="a" style="left:518px;top:390px;width:1px;height:18px;border-left:1px dotted #9a9a9a"></div>
<div class="t" style="left:50px;top:391px;font-size:12px;color:#7a7a7a">H_big</div>
<div class="t" style="left:173px;top:391px;font-size:12px;color:#7a7a7a">300.0</div>
<div class="t" style="left:253px;top:391px;font-size:12px;color:#000">= 300 mm</div>
<div class="a" style="left:407px;top:393px;width:13px;height:13px;background:#fff;border:1px solid #333"></div>
<div class="a" style="left:48px;top:425px;width:471px;height:1px;border-top:1px dotted #9a9a9a"></div>
<div class="a" style="left:170px;top:408px;width:1px;height:18px;border-left:1px dotted #9a9a9a"></div>
<div class="a" style="left:251px;top:408px;width:1px;height:18px;border-left:1px dotted #9a9a9a"></div>
<div class="a" style="left:403px;top:408px;width:1px;height:18px;border-left:1px dotted #9a9a9a"></div>
<div class="a" style="left:518px;top:408px;width:1px;height:18px;border-left:1px dotted #9a9a9a"></div>
<div class="t" style="left:50px;top:409px;font-size:12px;color:#7a7a7a">H_big_rev1</div>
<div class="t" style="left:173px;top:409px;font-size:12px;color:#7a7a7a">-300.0</div>
<div class="t" style="left:253px;top:409px;font-size:12px;color:#000">= -(H_big)</div>
<div class="a" style="left:407px;top:411px;width:13px;height:13px;background:#fff;border:1px solid #333"></div>
<div class="a" style="left:48px;top:443px;width:471px;height:1px;border-top:1px dotted #9a9a9a"></div>
<div class="a" style="left:170px;top:426px;width:1px;height:18px;border-left:1px dotted #9a9a9a"></div>
<div class="a" style="left:251px;top:426px;width:1px;height:18px;border-left:1px dotted #9a9a9a"></div>
<div class="a" style="left:403px;top:426px;width:1px;height:18px;border-left:1px dotted #9a9a9a"></div>
<div class="a" style="left:518px;top:426px;width:1px;height:18px;border-left:1px dotted #9a9a9a"></div>
<div class="t" style="left:50px;top:427px;font-size:12px;color:#7a7a7a">H_mid</div>
<div class="t" style="left:173px;top:427px;font-size:12px;color:#7a7a7a">100.0</div>
<div class="t" style="left:253px;top:427px;font-size:12px;color:#000">= 100 mm</div>
<div class="a" style="left:407px;top:429px;width:13px;height:13px;background:#fff;border:1px solid #333"></div>
<div class="a" style="left:48px;top:461px;width:471px;height:1px;border-top:1px dotted #9a9a9a"></div>
<div class="a" style="left:170px;top:444px;width:1px;height:18px;border-left:1px dotted #9a9a9a"></div>
<div class="a" style="left:251px;top:444px;width:1px;height:18px;border-left:1px dotted #9a9a9a"></div>
<div class="a" style="left:403px;top:444px;width:1px;height:18px;border-left:1px dotted #9a9a9a"></div>
<div class="a" style="left:518px;top:444px;width:1px;height:18px;border-left:1px dotted #9a9a9a"></div>
<div class="t" style="left:50px;top:445px;font-size:12px;color:#7a7a7a">H_mid_rev1</div>
<div class="t" style="left:173px;top:445px;font-size:12px;color:#7a7a7a">-100.0</div>
<div class="t" style="left:253px;top:445px;font-size:12px;color:#000">= -(H_mid)</div>
<div class="a" style="left:407px;top:447px;width:13px;height:13px;background:#fff;border:1px solid #333"></div>
<div class="a" style="left:48px;top:479px;width:471px;height:1px;border-top:1px dotted #9a9a9a"></div>
<div class="a" style="left:170px;top:462px;width:1px;height:18px;border-left:1px dotted #9a9a9a"></div>
<div class="a" style="left:251px;top:462px;width:1px;height:18px;border-left:1px dotted #9a9a9a"></div>
<div class="a" style="left:403px;top:462px;width:1px;height:18px;border-left:1px dotted #9a9a9a"></div>
<div class="a" style="left:518px;top:462px;width:1px;height:18px;border-left:1px dotted #9a9a9a"></div>
<div class="t" style="left:50px;top:463px;font-size:12px;color:#7a7a7a">H_small</div>
<div class="t" style="left:173px;top:463px;font-size:12px;color:#7a7a7a">100.0</div>
<div class="t" style="left:253px;top:463px;font-size:12px;color:#000">= 100 mm</div>
<div class="a" style="left:407px;top:465px;width:13px;height:13px;background:#fff;border:1px solid #333"></div>
<div class="a" style="left:48px;top:497px;width:471px;height:1px;border-top:1px dotted #9a9a9a"></div>
<div class="a" style="left:170px;top:480px;width:1px;height:18px;border-left:1px dotted #9a9a9a"></div>
<div class="a" style="left:251px;top:480px;width:1px;height:18px;border-left:1px dotted #9a9a9a"></div>
<div class="a" style="left:403px;top:480px;width:1px;height:18px;border-left:1px dotted #9a9a9a"></div>
<div class="a" style="left:518px;top:480px;width:1px;height:18px;border-left:1px dotted #9a9a9a"></div>
<div class="t" style="left:50px;top:481px;font-size:12px;color:#7a7a7a">H_small_rev1</div>
<div class="t" style="left:173px;top:481px;font-size:12px;color:#7a7a7a">-100.0</div>
<div class="t" style="left:253px;top:481px;font-size:12px;color:#000">= -(H_small)</div>
<div class="a" style="left:407px;top:483px;width:13px;height:13px;background:#fff;border:1px solid #333"></div>
<div class="a" style="left:48px;top:515px;width:471px;height:1px;border-top:1px dotted #9a9a9a"></div>
<div class="a" style="left:170px;top:498px;width:1px;height:18px;border-left:1px dotted #9a9a9a"></div>
<div class="a" style="left:251px;top:498px;width:1px;height:18px;border-left:1px dotted #9a9a9a"></div>
<div class="a" style="left:403px;top:498px;width:1px;height:18px;border-left:1px dotted #9a9a9a"></div>
<div class="a" style="left:518px;top:498px;width:1px;height:18px;border-left:1px dotted #9a9a9a"></div>
<div class="t" style="left:50px;top:499px;font-size:12px;color:#7a7a7a">big_radius</div>
<div class="t" style="left:173px;top:499px;font-size:12px;color:#7a7a7a">1000.0</div>
<div class="t" style="left:253px;top:499px;font-size:12px;color:#000">= 1000 mm</div>
<div class="a" style="left:407px;top:501px;width:13px;height:13px;background:#fff;border:1px solid #333"></div>
<div class="a" style="left:48px;top:533px;width:471px;height:1px;border-top:1px dotted #9a9a9a"></div>
<div class="a" style="left:170px;top:516px;width:1px;height:18px;border-left:1px dotted #9a9a9a"></div>
<div class="a" style="left:251px;top:516px;width:1px;height:18px;border-left:1px dotted #9a9a9a"></div>
<div class="a" style="left:403px;top:516px;width:1px;height:18px;border-left:1px dotted #9a9a9a"></div>
<div class="a" style="left:518px;top:516px;width:1px;height:18px;border-left:1px dotted #9a9a9a"></div>
<div class="t" style="left:50px;top:517px;font-size:12px;color:#7a7a7a">mid_radius</div>
<div class="t" style="left:173px;top:517px;font-size:12px;color:#7a7a7a">200.0</div>
<div class="t" style="left:253px;top:517px;font-size:12px;color:#000">= 200 mm</div>
<div class="a" style="left:407px;top:519px;width:13px;height:13px;background:#fff;border:1px solid #333"></div>
<div class="a" style="left:48px;top:551px;width:471px;height:1px;border-top:1px dotted #9a9a9a"></div>
<div class="a" style="left:170px;top:534px;width:1px;height:18px;border-left:1px dotted #9a9a9a"></div>
<div class="a" style="left:251px;top:534px;width:1px;height:18px;border-left:1px dotted #9a9a9a"></div>
<div class="a" style="left:403px;top:534px;width:1px;height:18px;border-left:1px dotted #9a9a9a"></div>
<div class="a" style="left:518px;top:534px;width:1px;height:18px;border-left:1px dotted #9a9a9a"></div>
<div class="t" style="left:50px;top:535px;font-size:12px;color:#7a7a7a">small_radius</div>
<div class="t" style="left:173px;top:535px;font-size:12px;color:#7a7a7a">75.0</div>
<div class="t" style="left:253px;top:535px;font-size:12px;color:#000">= 75 mm</div>
<div class="a" style="left:407px;top:537px;width:13px;height:13px;background:#fff;border:1px solid #333"></div>
<div class="a" style="left:48px;top:555px;width:471px;height:19px;background:#98b3d3"></div>
<div class="t" style="left:50px;top:558px;font-size:12px;font-weight:bold;color:#000">Identity Data</div>
<svg class="a" style="left:505px;top:560px" width="8" height="10"><path d="M1,1L4,4L7,1M1,5L4,8L7,5" stroke="#111" stroke-width="1.3" fill="none"/></svg>
<div class="a" style="left:170px;top:574px;width:1px;height:31px;border-left:1px dotted #9a9a9a"></div>
<div class="a" style="left:251px;top:574px;width:1px;height:31px;border-left:1px dotted #9a9a9a"></div>
<div class="a" style="left:403px;top:574px;width:1px;height:31px;border-left:1px dotted #9a9a9a"></div>
<div class="a" style="left:518px;top:574px;width:1px;height:31px;border-left:1px dotted #9a9a9a"></div>
<svg class="a" style="left:48px;top:617px" width="220" height="22">
<path d="M3,19l2,-6l11,-11l3,3l-11,11z" fill="#f0d080" stroke="#555" stroke-width="1"/>
<g transform="translate(31,0)"><path d="M5,6h7l4,4v10h-11z" fill="#fff" stroke="#444"/><circle cx="4" cy="4" r="2.3" fill="#f08010"/></g>
<g transform="translate(60,0)"><path d="M5,6h7l4,4v10h-11z" fill="#fff" stroke="#999"/><path d="M1,1l6,6M7,1l-6,6" stroke="#e04040" stroke-width="1.2"/></g>
<g transform="translate(91,0)"><path d="M4,18v-14M1,7l3,-4l3,4" stroke="#3a6aa0" stroke-width="1.5" fill="none"/><rect x="9" y="4" width="8" height="14" fill="#f8f8f8" stroke="#8ab"/></g>
<g transform="translate(121,0)"><path d="M4,3v14M1,13l3,4l3,-4" stroke="#3a6aa0" stroke-width="1.5" fill="none"/><rect x="9" y="4" width="8" height="14" fill="#f8f8f8" stroke="#8ab"/></g>
</svg>
<svg class="a" style="left:214px;top:617px" width="50" height="22">
<text x="1" y="10" font-size="9" font-weight="bold" fill="#2a4a8a" font-family="Liberation Sans">A</text><text x="1" y="20" font-size="9" font-weight="bold" fill="#2a4a8a" font-family="Liberation Sans">Z</text><path d="M10,4v13M7,14l3,4l3,-4" stroke="#2a4a8a" stroke-width="1.3" fill="none"/>
<g transform="translate(30,0)"><text x="1" y="10" font-size="9" font-weight="bold" fill="#2a4a8a" font-family="Liberation Sans">A</text><text x="1" y="20" font-size="9" font-weight="bold" fill="#2a4a8a" font-family="Liberation Sans">Z</text><path d="M10,18v-13M7,8l3,-4l3,4" stroke="#2a4a8a" stroke-width="1.3" fill="none"/></g>
</svg>
<div class="a" style="left:396px;top:618px;width:124px;height:23px;background:#e1e1e1;border:1px solid #adadad"></div>
<div class="t" style="left:402px;top:622px;font-size:11px;color:#000">Manage Lookup Tables</div>
<div class="t" style="left:45px;top:654px;font-size:11px;color:#0066cc;text-decoration:underline">How do I manage family types?</div>
<div class="a" style="left:276px;top:654px;width:76px;height:22px;background:#e1e1e1;border:2px solid #0078d7"></div>
<div class="t" style="left:276px;width:76px;text-align:center;top:658px;font-size:11.5px;color:#000">OK</div>
<div class="a" style="left:360px;top:654px;width:76px;height:22px;background:#e1e1e1;border:1px solid #adadad"></div>
<div class="t" style="left:360px;width:76px;text-align:center;top:658px;font-size:11.5px;color:#000">Cancel</div>
<div class="a" style="left:444px;top:654px;width:76px;height:22px;background:#e1e1e1;border:1px solid #adadad"></div>
<div class="t" style="left:444px;width:76px;text-align:center;top:658px;font-size:11.5px;color:#000">Apply</div>
<svg class="a" style="left:518px;top:676px" width="11" height="11"><g fill="#b8b8b8"><rect x="8" y="0" width="2" height="2"/><rect x="4" y="4" width="2" height="2"/><rect x="8" y="4" width="2" height="2"/><rect x="0" y="8" width="2" height="2"/><rect x="4" y="8" width="2" height="2"/><rect x="8" y="8" width="2" height="2"/></g></svg>

<!-- ANNOTATIONS -->
<svg class="a" style="left:0;top:0" width="1920" height="1080" viewBox="0 0 1920 1080">
<g fill="none" stroke="#ed1c24" stroke-width="4.5">
<rect x="44.5" y="405.5" width="351" height="19"/>
<rect x="44.5" y="442.5" width="351" height="18"/>
<rect x="47" y="478" width="349" height="20"/>
</g>
<g fill="none" stroke="#ed1c24" stroke-width="5" stroke-linecap="round">
<line x1="385" y1="412" x2="1329" y2="333"/>
<line x1="385" y1="412" x2="1402" y2="604"/>
<line x1="396" y1="450" x2="662" y2="630"/>
<line x1="396" y1="450" x2="682" y2="712"/>
<line x1="391" y1="487" x2="573" y2="672"/>
<line x1="391" y1="487" x2="578" y2="702"/>
</g>
<g fill="none" stroke="#ed1c24" stroke-width="4.5">
<ellipse cx="1358" cy="323" rx="30" ry="29"/>
<ellipse cx="1418" cy="610" rx="19" ry="27"/>
<ellipse cx="680" cy="646" rx="26" ry="21"/>
<ellipse cx="589" cy="676" rx="22" ry="12"/>
<ellipse cx="591" cy="702" rx="15" ry="11"/>
<ellipse cx="697" cy="717" rx="18" ry="12"/>
</g>
<text x="576" y="547" font-size="24" fill="#ed1c24" font-family="Liberation Sans">6 points Z direction</text>
<text x="576" y="576" font-size="24" fill="#ed1c24" font-family="Liberation Sans">are facing down</text>
</svg>

</body></html>
